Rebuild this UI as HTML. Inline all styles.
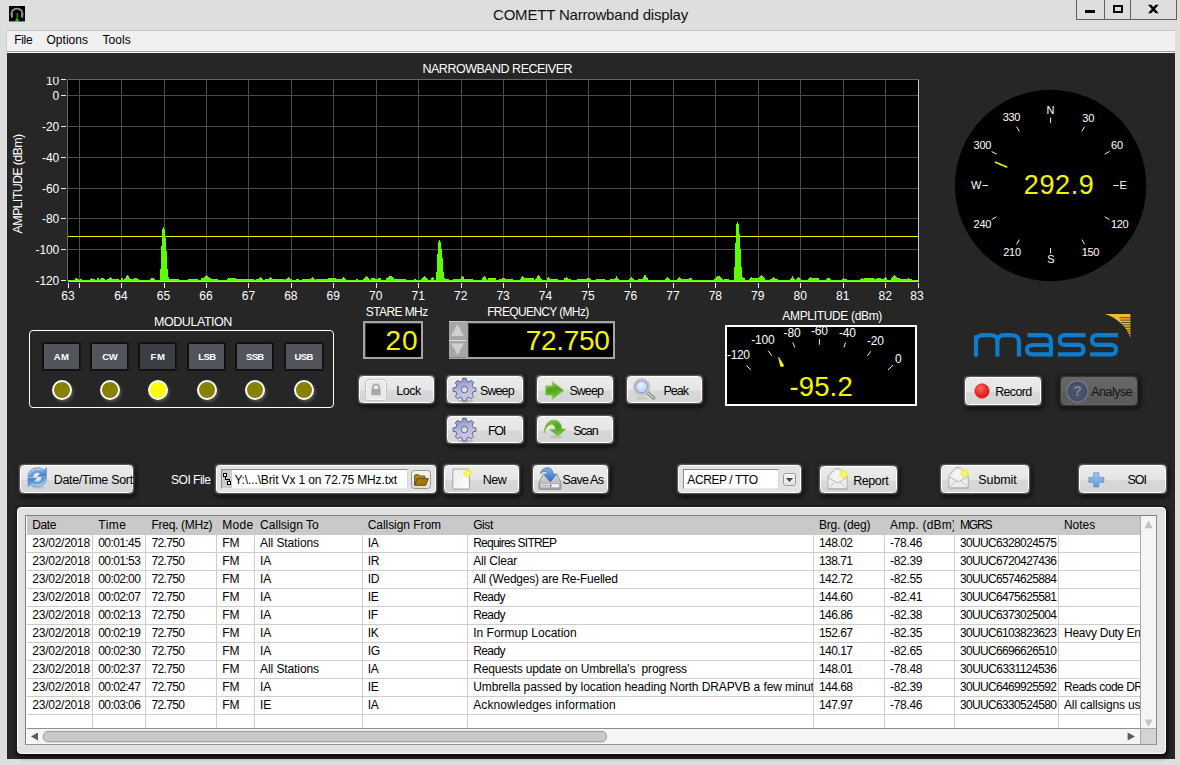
<!DOCTYPE html>
<html><head><meta charset="utf-8"><title>COMETT Narrowband display</title>
<style>
html,body{margin:0;padding:0;}
body{width:1180px;height:765px;overflow:hidden;position:relative;background:#dedede;font-family:"Liberation Sans",sans-serif;}
.t{position:absolute;white-space:nowrap;}
.btn{position:absolute;box-sizing:border-box;border:1.5px solid #fff;border-radius:3.5px;background:linear-gradient(#ebebeb 0%,#e5e5e5 53%,#d8d8d8 55%,#d5d5d5 100%);box-shadow:0 0 2px 0.6px rgba(190,190,190,.55),1px 1.5px 4px 2px rgba(0,0,0,.75);overflow:hidden;}
svg{position:absolute;overflow:visible;}
</style></head><body>
<svg style="left:9px;top:6px" width="16" height="16" viewBox="0 0 16 16"><rect width="16" height="16" fill="#000"/>
<path d="M3.2 11 C1.5 8 2.5 2.6 8 2.6 C13.5 2.6 14.5 8 12.8 11" fill="none" stroke="#8c8c8c" stroke-width="1.8"/>
<rect x="1.8" y="7" width="2.2" height="4.5" fill="#8c8c8c"/><rect x="12" y="7" width="2.2" height="4.5" fill="#8c8c8c"/>
<path d="M0 16 L0 15 L6 15 L7.6 12.5 L7.6 7 L8.6 7 L8.6 12.5 L10 15 L16 15 L16 16 Z" fill="#00e000"/></svg>
<div class="t" style="left:493.00px;top:7.20px;font-size:15px;line-height:15px;color:#111;letter-spacing:-0.191px;">COMETT Narrowband display</div>
<div style="position:absolute;left:1076px;top:-1px;width:101px;height:21px;box-sizing:border-box;border:1px solid #5c6068;"></div>
<div style="position:absolute;left:1104px;top:0px;width:1px;height:19px;background:#5c6068;"></div>
<div style="position:absolute;left:1130px;top:0px;width:1px;height:19px;background:#5c6068;"></div>
<div style="position:absolute;left:1085px;top:10px;width:10px;height:3px;background:#000;"></div>
<div style="position:absolute;left:1113px;top:5px;width:10px;height:8px;box-sizing:border-box;border:2px solid #000;border-top-width:2px;"></div>
<svg style="left:1148px;top:4px;overflow:hidden" width="11" height="10" viewBox="0 0 11 10"><defs><clipPath id="cx"><rect x="0" y="0.7" width="11" height="8.5"/></clipPath></defs><path d="M0.2 -0.8 L10.4 10.8 M10.4 -0.8 L0.2 10.8" stroke="#000" stroke-width="2.5" clip-path="url(#cx)"/></svg>
<div style="position:absolute;left:7px;top:30px;width:1168px;height:1px;background:#c6c6c6;"></div>
<div style="position:absolute;left:7px;top:31px;width:1168px;height:20px;background:#f0f0f0;"></div>
<div style="position:absolute;left:7px;top:51px;width:1168px;height:1px;background:#9c9c9c;"></div>
<div style="position:absolute;left:7px;top:52px;width:1168px;height:1px;background:#fbfbfb;"></div>
<div style="position:absolute;left:6px;top:30px;width:1px;height:23px;background:#d2d2d2;"></div>
<div class="t" style="left:14.20px;top:33.54px;font-size:12px;line-height:12px;color:#000;letter-spacing:-0.309px;">File</div>
<div class="t" style="left:46.50px;top:33.54px;font-size:12px;line-height:12px;color:#000;letter-spacing:0.021px;">Options</div>
<div class="t" style="left:102.40px;top:33.54px;font-size:12px;line-height:12px;color:#000;letter-spacing:0.117px;">Tools</div>
<div style="position:absolute;left:7px;top:53px;width:1168px;height:706px;background:#262626;"></div>
<div class="t" style="left:422.50px;top:63.12px;font-size:12.5px;line-height:12.5px;color:#fff;letter-spacing:-0.503px;">NARROWBAND RECEIVER</div>
<svg style="left:0;top:0" width="1180" height="320" viewBox="0 0 1180 320" shape-rendering="crispEdges">
<rect x="68.0" y="79.8" width="850.0" height="200.8" fill="#000"/>
<line x1="79.5" y1="79.8" x2="79.5" y2="280.7" stroke="#4a4a4a" stroke-width="1"/>
<line x1="79.5" y1="283" x2="79.5" y2="288" stroke="#e8e8e8" stroke-width="1"/>
<line x1="121.5" y1="79.8" x2="121.5" y2="280.7" stroke="#4a4a4a" stroke-width="1"/>
<line x1="121.5" y1="283" x2="121.5" y2="288" stroke="#e8e8e8" stroke-width="1"/>
<line x1="164.5" y1="79.8" x2="164.5" y2="280.7" stroke="#4a4a4a" stroke-width="1"/>
<line x1="164.5" y1="283" x2="164.5" y2="288" stroke="#e8e8e8" stroke-width="1"/>
<line x1="206.5" y1="79.8" x2="206.5" y2="280.7" stroke="#4a4a4a" stroke-width="1"/>
<line x1="206.5" y1="283" x2="206.5" y2="288" stroke="#e8e8e8" stroke-width="1"/>
<line x1="248.5" y1="79.8" x2="248.5" y2="280.7" stroke="#4a4a4a" stroke-width="1"/>
<line x1="248.5" y1="283" x2="248.5" y2="288" stroke="#e8e8e8" stroke-width="1"/>
<line x1="291.5" y1="79.8" x2="291.5" y2="280.7" stroke="#4a4a4a" stroke-width="1"/>
<line x1="291.5" y1="283" x2="291.5" y2="288" stroke="#e8e8e8" stroke-width="1"/>
<line x1="333.5" y1="79.8" x2="333.5" y2="280.7" stroke="#4a4a4a" stroke-width="1"/>
<line x1="333.5" y1="283" x2="333.5" y2="288" stroke="#e8e8e8" stroke-width="1"/>
<line x1="376.5" y1="79.8" x2="376.5" y2="280.7" stroke="#4a4a4a" stroke-width="1"/>
<line x1="376.5" y1="283" x2="376.5" y2="288" stroke="#e8e8e8" stroke-width="1"/>
<line x1="418.5" y1="79.8" x2="418.5" y2="280.7" stroke="#4a4a4a" stroke-width="1"/>
<line x1="418.5" y1="283" x2="418.5" y2="288" stroke="#e8e8e8" stroke-width="1"/>
<line x1="461.5" y1="79.8" x2="461.5" y2="280.7" stroke="#4a4a4a" stroke-width="1"/>
<line x1="461.5" y1="283" x2="461.5" y2="288" stroke="#e8e8e8" stroke-width="1"/>
<line x1="503.5" y1="79.8" x2="503.5" y2="280.7" stroke="#4a4a4a" stroke-width="1"/>
<line x1="503.5" y1="283" x2="503.5" y2="288" stroke="#e8e8e8" stroke-width="1"/>
<line x1="546.5" y1="79.8" x2="546.5" y2="280.7" stroke="#4a4a4a" stroke-width="1"/>
<line x1="546.5" y1="283" x2="546.5" y2="288" stroke="#e8e8e8" stroke-width="1"/>
<line x1="588.5" y1="79.8" x2="588.5" y2="280.7" stroke="#4a4a4a" stroke-width="1"/>
<line x1="588.5" y1="283" x2="588.5" y2="288" stroke="#e8e8e8" stroke-width="1"/>
<line x1="630.5" y1="79.8" x2="630.5" y2="280.7" stroke="#4a4a4a" stroke-width="1"/>
<line x1="630.5" y1="283" x2="630.5" y2="288" stroke="#e8e8e8" stroke-width="1"/>
<line x1="673.5" y1="79.8" x2="673.5" y2="280.7" stroke="#4a4a4a" stroke-width="1"/>
<line x1="673.5" y1="283" x2="673.5" y2="288" stroke="#e8e8e8" stroke-width="1"/>
<line x1="715.5" y1="79.8" x2="715.5" y2="280.7" stroke="#4a4a4a" stroke-width="1"/>
<line x1="715.5" y1="283" x2="715.5" y2="288" stroke="#e8e8e8" stroke-width="1"/>
<line x1="758.5" y1="79.8" x2="758.5" y2="280.7" stroke="#4a4a4a" stroke-width="1"/>
<line x1="758.5" y1="283" x2="758.5" y2="288" stroke="#e8e8e8" stroke-width="1"/>
<line x1="800.5" y1="79.8" x2="800.5" y2="280.7" stroke="#4a4a4a" stroke-width="1"/>
<line x1="800.5" y1="283" x2="800.5" y2="288" stroke="#e8e8e8" stroke-width="1"/>
<line x1="843.5" y1="79.8" x2="843.5" y2="280.7" stroke="#4a4a4a" stroke-width="1"/>
<line x1="843.5" y1="283" x2="843.5" y2="288" stroke="#e8e8e8" stroke-width="1"/>
<line x1="885.5" y1="79.8" x2="885.5" y2="280.7" stroke="#4a4a4a" stroke-width="1"/>
<line x1="885.5" y1="283" x2="885.5" y2="288" stroke="#e8e8e8" stroke-width="1"/>
<line x1="68.5" y1="283" x2="68.5" y2="288" stroke="#e8e8e8" stroke-width="1"/>
<line x1="918.5" y1="283" x2="918.5" y2="288" stroke="#e8e8e8" stroke-width="1"/>
<line x1="61" y1="79.5" x2="66" y2="79.5" stroke="#e8e8e8" stroke-width="1"/>
<line x1="68.0" y1="95.5" x2="918.0" y2="95.5" stroke="#4a4a4a" stroke-width="1"/>
<line x1="61" y1="95.5" x2="66" y2="95.5" stroke="#e8e8e8" stroke-width="1"/>
<line x1="68.0" y1="126.5" x2="918.0" y2="126.5" stroke="#4a4a4a" stroke-width="1"/>
<line x1="61" y1="126.5" x2="66" y2="126.5" stroke="#e8e8e8" stroke-width="1"/>
<line x1="68.0" y1="157.5" x2="918.0" y2="157.5" stroke="#4a4a4a" stroke-width="1"/>
<line x1="61" y1="157.5" x2="66" y2="157.5" stroke="#e8e8e8" stroke-width="1"/>
<line x1="68.0" y1="188.5" x2="918.0" y2="188.5" stroke="#4a4a4a" stroke-width="1"/>
<line x1="61" y1="188.5" x2="66" y2="188.5" stroke="#e8e8e8" stroke-width="1"/>
<line x1="68.0" y1="218.5" x2="918.0" y2="218.5" stroke="#4a4a4a" stroke-width="1"/>
<line x1="61" y1="218.5" x2="66" y2="218.5" stroke="#e8e8e8" stroke-width="1"/>
<line x1="68.0" y1="249.5" x2="918.0" y2="249.5" stroke="#4a4a4a" stroke-width="1"/>
<line x1="61" y1="249.5" x2="66" y2="249.5" stroke="#e8e8e8" stroke-width="1"/>
<line x1="61" y1="280.5" x2="66" y2="280.5" stroke="#e8e8e8" stroke-width="1"/>
<rect x="67.5" y="79.5" width="851.0" height="200.8" fill="none" stroke="#666" stroke-width="1"/>
<line x1="918.5" y1="79.8" x2="918.5" y2="281.2" stroke="#d0d0d0" stroke-width="1"/>
<line x1="68.0" y1="236.5" x2="918.0" y2="236.5" stroke="#f0f000" stroke-width="1.2"/>
<polygon points="68.0,281.0 68.0,280.0 69.0,280.0 69.0,280.0 70.0,280.0 70.0,280.0 71.0,280.0 71.0,280.0 72.0,280.0 72.0,280.0 73.0,280.0 73.0,280.0 74.0,280.0 74.0,280.0 75.0,280.0 75.0,278.0 76.0,278.0 76.0,278.0 77.0,278.0 77.0,279.0 78.0,279.0 78.0,279.0 79.0,279.0 79.0,279.5 80.0,279.5 80.0,278.5 81.0,278.5 81.0,278.5 82.0,278.5 82.0,279.5 83.0,279.5 83.0,280.0 84.0,280.0 84.0,280.0 85.0,280.0 85.0,280.0 86.0,280.0 86.0,280.0 87.0,280.0 87.0,280.0 88.0,280.0 88.0,280.0 89.0,280.0 89.0,280.0 90.0,280.0 90.0,279.0 91.0,279.0 91.0,278.0 92.0,278.0 92.0,279.0 93.0,279.0 93.0,279.0 94.0,279.0 94.0,279.0 95.0,279.0 95.0,280.0 96.0,280.0 96.0,280.0 97.0,280.0 97.0,278.0 98.0,278.0 98.0,278.0 99.0,278.0 99.0,280.0 100.0,280.0 100.0,279.2 101.0,279.2 101.0,278.4 102.0,278.4 102.0,277.5 103.0,277.5 103.0,278.4 104.0,278.4 104.0,279.2 105.0,279.2 105.0,280.0 106.0,280.0 106.0,280.0 107.0,280.0 107.0,279.4 108.0,279.4 108.0,278.6 109.0,278.6 109.0,277.8 110.0,277.8 110.0,277.0 111.0,277.0 111.0,277.8 112.0,277.8 112.0,278.6 113.0,278.6 113.0,279.4 114.0,279.4 114.0,279.0 115.0,279.0 115.0,279.0 116.0,279.0 116.0,279.0 117.0,279.0 117.0,279.0 118.0,279.0 118.0,279.0 119.0,279.0 119.0,280.0 120.0,280.0 120.0,280.0 121.0,280.0 121.0,278.0 122.0,278.0 122.0,278.0 123.0,278.0 123.0,280.0 124.0,280.0 124.0,279.4 125.0,279.4 125.0,277.8 126.0,277.8 126.0,276.1 127.0,276.1 127.0,274.5 128.0,274.5 128.0,276.1 129.0,276.1 129.0,277.8 130.0,277.8 130.0,279.4 131.0,279.4 131.0,279.0 132.0,279.0 132.0,279.0 133.0,279.0 133.0,279.0 134.0,279.0 134.0,278.0 135.0,278.0 135.0,278.0 136.0,278.0 136.0,278.0 137.0,278.0 137.0,279.0 138.0,279.0 138.0,279.0 139.0,279.0 139.0,280.0 140.0,280.0 140.0,280.0 141.0,280.0 141.0,280.0 142.0,280.0 142.0,280.0 143.0,280.0 143.0,280.0 144.0,280.0 144.0,280.0 145.0,280.0 145.0,280.0 146.0,280.0 146.0,280.0 147.0,280.0 147.0,280.0 148.0,280.0 148.0,280.0 149.0,280.0 149.0,280.0 150.0,280.0 150.0,279.2 151.0,279.2 151.0,278.4 152.0,278.4 152.0,277.5 153.0,277.5 153.0,278.4 154.0,278.4 154.0,279.2 155.0,279.2 155.0,280.0 156.0,280.0 156.0,280.0 157.0,280.0 157.0,280.0 158.0,280.0 158.0,280.0 159.0,280.0 159.0,280.0 160.0,280.0 160.0,268.5 161.0,268.5 161.0,245.8 162.0,245.8 162.0,229.0 163.0,229.0 163.0,226.8 164.0,226.8 164.0,229.0 165.0,229.0 165.0,238.2 166.0,238.2 166.0,251.2 167.0,251.2 167.0,268.5 168.0,268.5 168.0,277.0 169.0,277.0 169.0,279.0 170.0,279.0 170.0,279.0 171.0,279.0 171.0,279.0 172.0,279.0 172.0,279.0 173.0,279.0 173.0,279.0 174.0,279.0 174.0,279.0 175.0,279.0 175.0,279.0 176.0,279.0 176.0,279.0 177.0,279.0 177.0,279.0 178.0,279.0 178.0,279.0 179.0,279.0 179.0,280.0 180.0,280.0 180.0,280.0 181.0,280.0 181.0,280.0 182.0,280.0 182.0,280.0 183.0,280.0 183.0,280.0 184.0,280.0 184.0,280.0 185.0,280.0 185.0,280.0 186.0,280.0 186.0,280.0 187.0,280.0 187.0,280.0 188.0,280.0 188.0,279.0 189.0,279.0 189.0,279.0 190.0,279.0 190.0,279.0 191.0,279.0 191.0,279.0 192.0,279.0 192.0,279.0 193.0,279.0 193.0,279.0 194.0,279.0 194.0,279.0 195.0,279.0 195.0,279.0 196.0,279.0 196.0,279.0 197.0,279.0 197.0,279.0 198.0,279.0 198.0,280.0 199.0,280.0 199.0,280.0 200.0,280.0 200.0,280.0 201.0,280.0 201.0,278.0 202.0,278.0 202.0,278.0 203.0,278.0 203.0,277.6 204.0,277.6 204.0,276.7 205.0,276.7 205.0,275.9 206.0,275.9 206.0,275.0 207.0,275.0 207.0,275.9 208.0,275.9 208.0,276.7 209.0,276.7 209.0,277.6 210.0,277.6 210.0,278.4 211.0,278.4 211.0,279.0 212.0,279.0 212.0,279.0 213.0,279.0 213.0,279.0 214.0,279.0 214.0,279.0 215.0,279.0 215.0,279.0 216.0,279.0 216.0,279.0 217.0,279.0 217.0,279.0 218.0,279.0 218.0,280.0 219.0,280.0 219.0,280.0 220.0,280.0 220.0,280.0 221.0,280.0 221.0,280.0 222.0,280.0 222.0,280.0 223.0,280.0 223.0,280.0 224.0,280.0 224.0,280.0 225.0,280.0 225.0,280.0 226.0,280.0 226.0,279.8 227.0,279.8 227.0,279.2 228.0,279.2 228.0,278.0 229.0,278.0 229.0,278.0 230.0,278.0 230.0,277.5 231.0,277.5 231.0,278.0 232.0,278.0 232.0,278.0 233.0,278.0 233.0,278.0 234.0,278.0 234.0,278.0 235.0,278.0 235.0,278.0 236.0,278.0 236.0,279.0 237.0,279.0 237.0,279.0 238.0,279.0 238.0,279.0 239.0,279.0 239.0,279.0 240.0,279.0 240.0,279.0 241.0,279.0 241.0,279.0 242.0,279.0 242.0,279.0 243.0,279.0 243.0,279.0 244.0,279.0 244.0,279.0 245.0,279.0 245.0,279.0 246.0,279.0 246.0,279.0 247.0,279.0 247.0,279.0 248.0,279.0 248.0,279.0 249.0,279.0 249.0,279.0 250.0,279.0 250.0,279.0 251.0,279.0 251.0,279.0 252.0,279.0 252.0,279.0 253.0,279.0 253.0,279.0 254.0,279.0 254.0,280.0 255.0,280.0 255.0,280.0 256.0,280.0 256.0,279.0 257.0,279.0 257.0,279.0 258.0,279.0 258.0,279.0 259.0,279.0 259.0,278.0 260.0,278.0 260.0,277.0 261.0,277.0 261.0,278.0 262.0,278.0 262.0,279.0 263.0,279.0 263.0,280.0 264.0,280.0 264.0,280.0 265.0,280.0 265.0,279.0 266.0,279.0 266.0,279.0 267.0,279.0 267.0,279.0 268.0,279.0 268.0,279.0 269.0,279.0 269.0,278.0 270.0,278.0 270.0,277.0 271.0,277.0 271.0,278.0 272.0,278.0 272.0,279.0 273.0,279.0 273.0,279.0 274.0,279.0 274.0,279.0 275.0,279.0 275.0,279.0 276.0,279.0 276.0,279.0 277.0,279.0 277.0,279.0 278.0,279.0 278.0,279.0 279.0,279.0 279.0,279.0 280.0,279.0 280.0,279.0 281.0,279.0 281.0,279.0 282.0,279.0 282.0,279.0 283.0,279.0 283.0,279.0 284.0,279.0 284.0,280.0 285.0,280.0 285.0,279.4 286.0,279.4 286.0,278.6 287.0,278.6 287.0,277.8 288.0,277.8 288.0,277.0 289.0,277.0 289.0,277.8 290.0,277.8 290.0,278.6 291.0,278.6 291.0,279.4 292.0,279.4 292.0,280.0 293.0,280.0 293.0,280.0 294.0,280.0 294.0,280.0 295.0,280.0 295.0,280.0 296.0,280.0 296.0,279.0 297.0,279.0 297.0,279.0 298.0,279.0 298.0,279.0 299.0,279.0 299.0,280.0 300.0,280.0 300.0,280.0 301.0,280.0 301.0,280.0 302.0,280.0 302.0,279.0 303.0,279.0 303.0,279.0 304.0,279.0 304.0,279.0 305.0,279.0 305.0,279.0 306.0,279.0 306.0,279.0 307.0,279.0 307.0,279.0 308.0,279.0 308.0,279.0 309.0,279.0 309.0,279.0 310.0,279.0 310.0,279.0 311.0,279.0 311.0,278.0 312.0,278.0 312.0,277.0 313.0,277.0 313.0,278.0 314.0,278.0 314.0,279.0 315.0,279.0 315.0,280.0 316.0,280.0 316.0,279.0 317.0,279.0 317.0,279.0 318.0,279.0 318.0,279.0 319.0,279.0 319.0,279.0 320.0,279.0 320.0,279.0 321.0,279.0 321.0,279.0 322.0,279.0 322.0,279.0 323.0,279.0 323.0,279.0 324.0,279.0 324.0,279.0 325.0,279.0 325.0,279.0 326.0,279.0 326.0,279.0 327.0,279.0 327.0,279.0 328.0,279.0 328.0,278.0 329.0,278.0 329.0,278.0 330.0,278.0 330.0,278.0 331.0,278.0 331.0,278.0 332.0,278.0 332.0,278.0 333.0,278.0 333.0,278.0 334.0,278.0 334.0,278.0 335.0,278.0 335.0,278.0 336.0,278.0 336.0,279.0 337.0,279.0 337.0,279.0 338.0,279.0 338.0,279.0 339.0,279.0 339.0,279.0 340.0,279.0 340.0,279.0 341.0,279.0 341.0,278.8 342.0,278.8 342.0,277.6 343.0,277.6 343.0,276.5 344.0,276.5 344.0,277.6 345.0,277.6 345.0,278.8 346.0,278.8 346.0,279.9 347.0,279.9 347.0,280.0 348.0,280.0 348.0,280.0 349.0,280.0 349.0,280.0 350.0,280.0 350.0,280.0 351.0,280.0 351.0,280.0 352.0,280.0 352.0,280.0 353.0,280.0 353.0,280.0 354.0,280.0 354.0,280.0 355.0,280.0 355.0,280.0 356.0,280.0 356.0,279.0 357.0,279.0 357.0,279.0 358.0,279.0 358.0,280.0 359.0,280.0 359.0,280.0 360.0,280.0 360.0,280.0 361.0,280.0 361.0,280.0 362.0,280.0 362.0,280.0 363.0,280.0 363.0,279.0 364.0,279.0 364.0,278.0 365.0,278.0 365.0,277.0 366.0,277.0 366.0,276.0 367.0,276.0 367.0,277.0 368.0,277.0 368.0,278.0 369.0,278.0 369.0,279.0 370.0,279.0 370.0,280.0 371.0,280.0 371.0,278.0 372.0,278.0 372.0,278.0 373.0,278.0 373.0,278.0 374.0,278.0 374.0,278.0 375.0,278.0 375.0,279.0 376.0,279.0 376.0,279.0 377.0,279.0 377.0,279.0 378.0,279.0 378.0,278.0 379.0,278.0 379.0,278.0 380.0,278.0 380.0,278.0 381.0,278.0 381.0,280.0 382.0,280.0 382.0,280.0 383.0,280.0 383.0,280.0 384.0,280.0 384.0,280.0 385.0,280.0 385.0,280.0 386.0,280.0 386.0,278.0 387.0,278.0 387.0,278.0 388.0,278.0 388.0,277.3 389.0,277.3 389.0,276.4 390.0,276.4 390.0,275.5 391.0,275.5 391.0,276.4 392.0,276.4 392.0,277.3 393.0,277.3 393.0,278.2 394.0,278.2 394.0,279.0 395.0,279.0 395.0,279.0 396.0,279.0 396.0,279.0 397.0,279.0 397.0,279.0 398.0,279.0 398.0,279.0 399.0,279.0 399.0,279.0 400.0,279.0 400.0,279.0 401.0,279.0 401.0,279.0 402.0,279.0 402.0,279.0 403.0,279.0 403.0,279.0 404.0,279.0 404.0,279.0 405.0,279.0 405.0,279.0 406.0,279.0 406.0,280.0 407.0,280.0 407.0,280.0 408.0,280.0 408.0,280.0 409.0,280.0 409.0,280.0 410.0,280.0 410.0,280.0 411.0,280.0 411.0,280.0 412.0,280.0 412.0,280.0 413.0,280.0 413.0,280.0 414.0,280.0 414.0,279.0 415.0,279.0 415.0,279.0 416.0,279.0 416.0,280.0 417.0,280.0 417.0,280.0 418.0,280.0 418.0,280.0 419.0,280.0 419.0,280.0 420.0,280.0 420.0,280.0 421.0,280.0 421.0,279.0 422.0,279.0 422.0,278.0 423.0,278.0 423.0,277.0 424.0,277.0 424.0,276.0 425.0,276.0 425.0,277.0 426.0,277.0 426.0,278.0 427.0,278.0 427.0,279.0 428.0,279.0 428.0,280.0 429.0,280.0 429.0,280.0 430.0,280.0 430.0,279.7 431.0,279.7 431.0,278.3 432.0,278.3 432.0,277.0 433.0,277.0 433.0,278.3 434.0,278.3 434.0,279.7 435.0,279.7 435.0,280.0 436.0,280.0 436.0,271.6 437.0,271.6 437.0,254.3 438.0,254.3 438.0,241.6 439.0,241.6 439.0,240.0 440.0,240.0 440.0,241.6 441.0,241.6 441.0,248.6 442.0,248.6 442.0,258.4 443.0,258.4 443.0,271.6 444.0,271.6 444.0,278.0 445.0,278.0 445.0,279.0 446.0,279.0 446.0,279.0 447.0,279.0 447.0,279.0 448.0,279.0 448.0,279.0 449.0,279.0 449.0,280.0 450.0,280.0 450.0,280.0 451.0,280.0 451.0,280.0 452.0,280.0 452.0,280.0 453.0,280.0 453.0,279.0 454.0,279.0 454.0,279.0 455.0,279.0 455.0,279.0 456.0,279.0 456.0,279.0 457.0,279.0 457.0,279.0 458.0,279.0 458.0,279.0 459.0,279.0 459.0,279.0 460.0,279.0 460.0,278.5 461.0,278.5 461.0,277.2 462.0,277.2 462.0,276.0 463.0,276.0 463.0,277.2 464.0,277.2 464.0,278.5 465.0,278.5 465.0,279.0 466.0,279.0 466.0,279.0 467.0,279.0 467.0,279.0 468.0,279.0 468.0,279.0 469.0,279.0 469.0,279.0 470.0,279.0 470.0,279.0 471.0,279.0 471.0,279.0 472.0,279.0 472.0,279.0 473.0,279.0 473.0,280.0 474.0,280.0 474.0,280.0 475.0,280.0 475.0,280.0 476.0,280.0 476.0,280.0 477.0,280.0 477.0,280.0 478.0,280.0 478.0,280.0 479.0,280.0 479.0,280.0 480.0,280.0 480.0,280.0 481.0,280.0 481.0,280.0 482.0,280.0 482.0,278.0 483.0,278.0 483.0,277.3 484.0,277.3 484.0,275.5 485.0,275.5 485.0,277.3 486.0,277.3 486.0,279.2 487.0,279.2 487.0,280.0 488.0,280.0 488.0,278.0 489.0,278.0 489.0,278.0 490.0,278.0 490.0,278.0 491.0,278.0 491.0,278.0 492.0,278.0 492.0,278.0 493.0,278.0 493.0,278.0 494.0,278.0 494.0,278.0 495.0,278.0 495.0,278.0 496.0,278.0 496.0,280.0 497.0,280.0 497.0,280.0 498.0,280.0 498.0,280.0 499.0,280.0 499.0,279.0 500.0,279.0 500.0,279.0 501.0,279.0 501.0,278.9 502.0,278.9 502.0,278.2 503.0,278.2 503.0,277.5 504.0,277.5 504.0,278.2 505.0,278.2 505.0,278.9 506.0,278.9 506.0,279.0 507.0,279.0 507.0,279.0 508.0,279.0 508.0,279.0 509.0,279.0 509.0,279.0 510.0,279.0 510.0,279.0 511.0,279.0 511.0,279.0 512.0,279.0 512.0,279.0 513.0,279.0 513.0,280.0 514.0,280.0 514.0,280.0 515.0,280.0 515.0,280.0 516.0,280.0 516.0,280.0 517.0,280.0 517.0,280.0 518.0,280.0 518.0,280.0 519.0,280.0 519.0,279.8 520.0,279.8 520.0,278.5 521.0,278.5 521.0,277.2 522.0,277.2 522.0,276.0 523.0,276.0 523.0,277.2 524.0,277.2 524.0,278.0 525.0,278.0 525.0,278.0 526.0,278.0 526.0,278.0 527.0,278.0 527.0,278.0 528.0,278.0 528.0,278.0 529.0,278.0 529.0,278.0 530.0,278.0 530.0,278.0 531.0,278.0 531.0,278.0 532.0,278.0 532.0,278.0 533.0,278.0 533.0,278.0 534.0,278.0 534.0,280.0 535.0,280.0 535.0,279.4 536.0,279.4 536.0,277.8 537.0,277.8 537.0,276.1 538.0,276.1 538.0,274.5 539.0,274.5 539.0,276.1 540.0,276.1 540.0,277.8 541.0,277.8 541.0,279.4 542.0,279.4 542.0,280.0 543.0,280.0 543.0,280.0 544.0,280.0 544.0,280.0 545.0,280.0 545.0,280.0 546.0,280.0 546.0,279.7 547.0,279.7 547.0,278.3 548.0,278.3 548.0,277.0 549.0,277.0 549.0,278.3 550.0,278.3 550.0,279.0 551.0,279.0 551.0,279.0 552.0,279.0 552.0,279.0 553.0,279.0 553.0,279.0 554.0,279.0 554.0,279.0 555.0,279.0 555.0,279.0 556.0,279.0 556.0,279.0 557.0,279.0 557.0,279.0 558.0,279.0 558.0,280.0 559.0,280.0 559.0,280.0 560.0,280.0 560.0,280.0 561.0,280.0 561.0,280.0 562.0,280.0 562.0,280.0 563.0,280.0 563.0,280.0 564.0,280.0 564.0,278.0 565.0,278.0 565.0,278.0 566.0,278.0 566.0,277.0 567.0,277.0 567.0,278.0 568.0,278.0 568.0,279.0 569.0,279.0 569.0,279.0 570.0,279.0 570.0,279.0 571.0,279.0 571.0,280.0 572.0,280.0 572.0,280.0 573.0,280.0 573.0,280.0 574.0,280.0 574.0,280.0 575.0,280.0 575.0,280.0 576.0,280.0 576.0,280.0 577.0,280.0 577.0,279.0 578.0,279.0 578.0,279.0 579.0,279.0 579.0,279.0 580.0,279.0 580.0,279.0 581.0,279.0 581.0,279.0 582.0,279.0 582.0,279.0 583.0,279.0 583.0,279.0 584.0,279.0 584.0,279.0 585.0,279.0 585.0,279.0 586.0,279.0 586.0,279.0 587.0,279.0 587.0,278.4 588.0,278.4 588.0,277.5 589.0,277.5 589.0,278.4 590.0,278.4 590.0,279.2 591.0,279.2 591.0,280.0 592.0,280.0 592.0,280.0 593.0,280.0 593.0,280.0 594.0,280.0 594.0,280.0 595.0,280.0 595.0,280.0 596.0,280.0 596.0,279.0 597.0,279.0 597.0,279.0 598.0,279.0 598.0,279.0 599.0,279.0 599.0,279.0 600.0,279.0 600.0,279.0 601.0,279.0 601.0,279.0 602.0,279.0 602.0,279.0 603.0,279.0 603.0,279.0 604.0,279.0 604.0,279.0 605.0,279.0 605.0,280.0 606.0,280.0 606.0,280.0 607.0,280.0 607.0,280.0 608.0,280.0 608.0,280.0 609.0,280.0 609.0,280.0 610.0,280.0 610.0,279.0 611.0,279.0 611.0,279.0 612.0,279.0 612.0,279.0 613.0,279.0 613.0,279.0 614.0,279.0 614.0,279.3 615.0,279.3 615.0,277.7 616.0,277.7 616.0,276.0 617.0,276.0 617.0,277.7 618.0,277.7 618.0,279.3 619.0,279.3 619.0,280.0 620.0,280.0 620.0,280.0 621.0,280.0 621.0,280.0 622.0,280.0 622.0,280.0 623.0,280.0 623.0,280.0 624.0,280.0 624.0,280.0 625.0,280.0 625.0,280.0 626.0,280.0 626.0,280.0 627.0,280.0 627.0,280.0 628.0,280.0 628.0,279.9 629.0,279.9 629.0,278.8 630.0,278.8 630.0,277.6 631.0,277.6 631.0,276.5 632.0,276.5 632.0,277.6 633.0,277.6 633.0,278.8 634.0,278.8 634.0,279.9 635.0,279.9 635.0,280.0 636.0,280.0 636.0,280.0 637.0,280.0 637.0,280.0 638.0,280.0 638.0,279.0 639.0,279.0 639.0,279.0 640.0,279.0 640.0,279.0 641.0,279.0 641.0,279.0 642.0,279.0 642.0,279.0 643.0,279.0 643.0,277.0 644.0,277.0 644.0,275.0 645.0,275.0 645.0,275.0 646.0,275.0 646.0,276.5 647.0,276.5 647.0,278.0 648.0,278.0 648.0,279.5 649.0,279.5 649.0,280.0 650.0,280.0 650.0,280.0 651.0,280.0 651.0,280.0 652.0,280.0 652.0,280.0 653.0,280.0 653.0,280.0 654.0,280.0 654.0,280.0 655.0,280.0 655.0,280.0 656.0,280.0 656.0,280.0 657.0,280.0 657.0,280.0 658.0,280.0 658.0,280.0 659.0,280.0 659.0,280.0 660.0,280.0 660.0,280.0 661.0,280.0 661.0,280.0 662.0,280.0 662.0,280.0 663.0,280.0 663.0,280.0 664.0,280.0 664.0,280.0 665.0,280.0 665.0,279.0 666.0,279.0 666.0,278.0 667.0,278.0 667.0,277.0 668.0,277.0 668.0,278.0 669.0,278.0 669.0,279.0 670.0,279.0 670.0,280.0 671.0,280.0 671.0,280.0 672.0,280.0 672.0,280.0 673.0,280.0 673.0,280.0 674.0,280.0 674.0,280.0 675.0,280.0 675.0,280.0 676.0,280.0 676.0,279.9 677.0,279.9 677.0,278.8 678.0,278.8 678.0,277.6 679.0,277.6 679.0,276.5 680.0,276.5 680.0,277.6 681.0,277.6 681.0,278.8 682.0,278.8 682.0,279.0 683.0,279.0 683.0,279.0 684.0,279.0 684.0,279.0 685.0,279.0 685.0,279.0 686.0,279.0 686.0,279.0 687.0,279.0 687.0,279.0 688.0,279.0 688.0,279.0 689.0,279.0 689.0,278.0 690.0,278.0 690.0,278.0 691.0,278.0 691.0,278.0 692.0,278.0 692.0,280.0 693.0,280.0 693.0,280.0 694.0,280.0 694.0,280.0 695.0,280.0 695.0,280.0 696.0,280.0 696.0,280.0 697.0,280.0 697.0,280.0 698.0,280.0 698.0,280.0 699.0,280.0 699.0,280.0 700.0,280.0 700.0,280.0 701.0,280.0 701.0,280.0 702.0,280.0 702.0,280.0 703.0,280.0 703.0,280.0 704.0,280.0 704.0,280.0 705.0,280.0 705.0,280.0 706.0,280.0 706.0,280.0 707.0,280.0 707.0,280.0 708.0,280.0 708.0,280.0 709.0,280.0 709.0,280.0 710.0,280.0 710.0,280.0 711.0,280.0 711.0,280.0 712.0,280.0 712.0,280.0 713.0,280.0 713.0,280.0 714.0,280.0 714.0,279.2 715.0,279.2 715.0,278.2 716.0,278.2 716.0,277.3 717.0,277.3 717.0,276.4 718.0,276.4 718.0,275.5 719.0,275.5 719.0,276.4 720.0,276.4 720.0,277.3 721.0,277.3 721.0,278.2 722.0,278.2 722.0,279.2 723.0,279.2 723.0,280.0 724.0,280.0 724.0,279.0 725.0,279.0 725.0,279.0 726.0,279.0 726.0,279.0 727.0,279.0 727.0,279.0 728.0,279.0 728.0,279.0 729.0,279.0 729.0,280.0 730.0,280.0 730.0,280.0 731.0,280.0 731.0,280.0 732.0,280.0 732.0,280.0 733.0,280.0 733.0,280.0 734.0,280.0 734.0,267.4 735.0,267.4 735.0,242.7 736.0,242.7 736.0,224.4 737.0,224.4 737.0,222.0 738.0,222.0 738.0,224.4 739.0,224.4 739.0,234.4 740.0,234.4 740.0,248.6 741.0,248.6 741.0,267.4 742.0,267.4 742.0,276.6 743.0,276.6 743.0,278.0 744.0,278.0 744.0,278.0 745.0,278.0 745.0,280.0 746.0,280.0 746.0,280.0 747.0,280.0 747.0,280.0 748.0,280.0 748.0,279.9 749.0,279.9 749.0,278.8 750.0,278.8 750.0,277.6 751.0,277.6 751.0,276.5 752.0,276.5 752.0,277.6 753.0,277.6 753.0,278.0 754.0,278.0 754.0,278.0 755.0,278.0 755.0,278.0 756.0,278.0 756.0,278.0 757.0,278.0 757.0,278.0 758.0,278.0 758.0,278.0 759.0,278.0 759.0,277.1 760.0,277.1 760.0,275.8 761.0,275.8 761.0,274.5 762.0,274.5 762.0,275.8 763.0,275.8 763.0,277.1 764.0,277.1 764.0,278.0 765.0,278.0 765.0,279.7 766.0,279.7 766.0,280.0 767.0,280.0 767.0,280.0 768.0,280.0 768.0,280.0 769.0,280.0 769.0,280.0 770.0,280.0 770.0,279.0 771.0,279.0 771.0,279.0 772.0,279.0 772.0,278.3 773.0,278.3 773.0,277.0 774.0,277.0 774.0,278.3 775.0,278.3 775.0,279.0 776.0,279.0 776.0,279.0 777.0,279.0 777.0,279.0 778.0,279.0 778.0,280.0 779.0,280.0 779.0,280.0 780.0,280.0 780.0,280.0 781.0,280.0 781.0,280.0 782.0,280.0 782.0,280.0 783.0,280.0 783.0,280.0 784.0,280.0 784.0,280.0 785.0,280.0 785.0,280.0 786.0,280.0 786.0,280.0 787.0,280.0 787.0,280.0 788.0,280.0 788.0,280.0 789.0,280.0 789.0,280.0 790.0,280.0 790.0,279.3 791.0,279.3 791.0,277.7 792.0,277.7 792.0,276.0 793.0,276.0 793.0,277.7 794.0,277.7 794.0,279.3 795.0,279.3 795.0,280.0 796.0,280.0 796.0,279.0 797.0,279.0 797.0,278.0 798.0,278.0 798.0,277.0 799.0,277.0 799.0,278.0 800.0,278.0 800.0,279.0 801.0,279.0 801.0,280.0 802.0,280.0 802.0,280.0 803.0,280.0 803.0,280.0 804.0,280.0 804.0,280.0 805.0,280.0 805.0,280.0 806.0,280.0 806.0,280.0 807.0,280.0 807.0,280.0 808.0,280.0 808.0,279.0 809.0,279.0 809.0,278.0 810.0,278.0 810.0,277.0 811.0,277.0 811.0,278.0 812.0,278.0 812.0,278.0 813.0,278.0 813.0,278.0 814.0,278.0 814.0,278.0 815.0,278.0 815.0,278.0 816.0,278.0 816.0,278.0 817.0,278.0 817.0,278.0 818.0,278.0 818.0,278.0 819.0,278.0 819.0,280.0 820.0,280.0 820.0,280.0 821.0,280.0 821.0,280.0 822.0,280.0 822.0,280.0 823.0,280.0 823.0,280.0 824.0,280.0 824.0,280.0 825.0,280.0 825.0,280.0 826.0,280.0 826.0,279.2 827.0,279.2 827.0,278.4 828.0,278.4 828.0,277.5 829.0,277.5 829.0,278.4 830.0,278.4 830.0,279.2 831.0,279.2 831.0,280.0 832.0,280.0 832.0,280.0 833.0,280.0 833.0,280.0 834.0,280.0 834.0,280.0 835.0,280.0 835.0,280.0 836.0,280.0 836.0,280.0 837.0,280.0 837.0,280.0 838.0,280.0 838.0,280.0 839.0,280.0 839.0,280.0 840.0,280.0 840.0,280.0 841.0,280.0 841.0,280.0 842.0,280.0 842.0,279.0 843.0,279.0 843.0,278.0 844.0,278.0 844.0,279.0 845.0,279.0 845.0,279.0 846.0,279.0 846.0,279.0 847.0,279.0 847.0,280.0 848.0,280.0 848.0,280.0 849.0,280.0 849.0,280.0 850.0,280.0 850.0,280.0 851.0,280.0 851.0,280.0 852.0,280.0 852.0,280.0 853.0,280.0 853.0,280.0 854.0,280.0 854.0,280.0 855.0,280.0 855.0,280.0 856.0,280.0 856.0,280.0 857.0,280.0 857.0,280.0 858.0,280.0 858.0,280.0 859.0,280.0 859.0,280.0 860.0,280.0 860.0,279.0 861.0,279.0 861.0,278.7 862.0,278.7 862.0,277.5 863.0,277.5 863.0,278.7 864.0,278.7 864.0,278.0 865.0,278.0 865.0,278.0 866.0,278.0 866.0,278.0 867.0,278.0 867.0,278.0 868.0,278.0 868.0,278.0 869.0,278.0 869.0,278.0 870.0,278.0 870.0,278.0 871.0,278.0 871.0,278.0 872.0,278.0 872.0,278.0 873.0,278.0 873.0,277.5 874.0,277.5 874.0,278.7 875.0,278.7 875.0,279.0 876.0,279.0 876.0,279.0 877.0,279.0 877.0,278.0 878.0,278.0 878.0,278.0 879.0,278.0 879.0,278.0 880.0,278.0 880.0,278.0 881.0,278.0 881.0,279.0 882.0,279.0 882.0,279.0 883.0,279.0 883.0,279.0 884.0,279.0 884.0,278.3 885.0,278.3 885.0,277.0 886.0,277.0 886.0,278.3 887.0,278.3 887.0,279.7 888.0,279.7 888.0,280.0 889.0,280.0 889.0,280.0 890.0,280.0 890.0,279.8 891.0,279.8 891.0,278.0 892.0,278.0 892.0,277.4 893.0,277.4 893.0,276.2 894.0,276.2 894.0,275.0 895.0,275.0 895.0,276.2 896.0,276.2 896.0,277.4 897.0,277.4 897.0,278.0 898.0,278.0 898.0,278.0 899.0,278.0 899.0,278.0 900.0,278.0 900.0,279.0 901.0,279.0 901.0,279.0 902.0,279.0 902.0,279.0 903.0,279.0 903.0,279.0 904.0,279.0 904.0,279.0 905.0,279.0 905.0,279.0 906.0,279.0 906.0,279.0 907.0,279.0 907.0,279.0 908.0,279.0 908.0,278.0 909.0,278.0 909.0,279.0 910.0,279.0 910.0,279.0 911.0,279.0 911.0,279.0 912.0,279.0 912.0,280.0 913.0,280.0 913.0,280.0 914.0,280.0 914.0,280.0 915.0,280.0 915.0,280.0 916.0,280.0 916.0,280.0 917.0,280.0 917.0,280.0 918.0,280.0 918.0,281.0" fill="#5cff00"/>
<line x1="68.0" y1="281.5" x2="919.0" y2="281.5" stroke="#d0d0d0" stroke-width="1"/>
</svg>
<div class="t" style="right:1121.00px;top:75.04px;font-size:12px;line-height:12px;color:#fff;letter-spacing:-0.15px;">10</div>
<div class="t" style="right:1121.00px;top:90.04px;font-size:12px;line-height:12px;color:#fff;letter-spacing:-0.15px;">0</div>
<div class="t" style="right:1121.00px;top:121.04px;font-size:12px;line-height:12px;color:#fff;letter-spacing:-0.15px;">-20</div>
<div class="t" style="right:1121.00px;top:152.04px;font-size:12px;line-height:12px;color:#fff;letter-spacing:-0.15px;">-40</div>
<div class="t" style="right:1121.00px;top:183.04px;font-size:12px;line-height:12px;color:#fff;letter-spacing:-0.15px;">-60</div>
<div class="t" style="right:1121.00px;top:213.04px;font-size:12px;line-height:12px;color:#fff;letter-spacing:-0.15px;">-80</div>
<div class="t" style="right:1121.00px;top:244.04px;font-size:12px;line-height:12px;color:#fff;letter-spacing:-0.15px;">-100</div>
<div class="t" style="right:1121.00px;top:275.04px;font-size:12px;line-height:12px;color:#fff;letter-spacing:-0.15px;">-120</div>
<div class="t" style="left:-32.00px;width:200px;text-align:center;top:289.84px;font-size:12px;line-height:12px;color:#fff;letter-spacing:0px;">63</div>
<div class="t" style="left:21.06px;width:200px;text-align:center;top:289.84px;font-size:12px;line-height:12px;color:#fff;letter-spacing:0px;">64</div>
<div class="t" style="left:63.51px;width:200px;text-align:center;top:289.84px;font-size:12px;line-height:12px;color:#fff;letter-spacing:0px;">65</div>
<div class="t" style="left:105.96px;width:200px;text-align:center;top:289.84px;font-size:12px;line-height:12px;color:#fff;letter-spacing:0px;">66</div>
<div class="t" style="left:148.41px;width:200px;text-align:center;top:289.84px;font-size:12px;line-height:12px;color:#fff;letter-spacing:0px;">67</div>
<div class="t" style="left:190.86px;width:200px;text-align:center;top:289.84px;font-size:12px;line-height:12px;color:#fff;letter-spacing:0px;">68</div>
<div class="t" style="left:233.31px;width:200px;text-align:center;top:289.84px;font-size:12px;line-height:12px;color:#fff;letter-spacing:0px;">69</div>
<div class="t" style="left:275.76px;width:200px;text-align:center;top:289.84px;font-size:12px;line-height:12px;color:#fff;letter-spacing:0px;">70</div>
<div class="t" style="left:318.21px;width:200px;text-align:center;top:289.84px;font-size:12px;line-height:12px;color:#fff;letter-spacing:0px;">71</div>
<div class="t" style="left:360.66px;width:200px;text-align:center;top:289.84px;font-size:12px;line-height:12px;color:#fff;letter-spacing:0px;">72</div>
<div class="t" style="left:403.11px;width:200px;text-align:center;top:289.84px;font-size:12px;line-height:12px;color:#fff;letter-spacing:0px;">73</div>
<div class="t" style="left:445.56px;width:200px;text-align:center;top:289.84px;font-size:12px;line-height:12px;color:#fff;letter-spacing:0px;">74</div>
<div class="t" style="left:488.01px;width:200px;text-align:center;top:289.84px;font-size:12px;line-height:12px;color:#fff;letter-spacing:0px;">75</div>
<div class="t" style="left:530.46px;width:200px;text-align:center;top:289.84px;font-size:12px;line-height:12px;color:#fff;letter-spacing:0px;">76</div>
<div class="t" style="left:572.91px;width:200px;text-align:center;top:289.84px;font-size:12px;line-height:12px;color:#fff;letter-spacing:0px;">77</div>
<div class="t" style="left:615.36px;width:200px;text-align:center;top:289.84px;font-size:12px;line-height:12px;color:#fff;letter-spacing:0px;">78</div>
<div class="t" style="left:657.81px;width:200px;text-align:center;top:289.84px;font-size:12px;line-height:12px;color:#fff;letter-spacing:0px;">79</div>
<div class="t" style="left:700.26px;width:200px;text-align:center;top:289.84px;font-size:12px;line-height:12px;color:#fff;letter-spacing:0px;">80</div>
<div class="t" style="left:742.71px;width:200px;text-align:center;top:289.84px;font-size:12px;line-height:12px;color:#fff;letter-spacing:0px;">81</div>
<div class="t" style="left:785.16px;width:200px;text-align:center;top:289.84px;font-size:12px;line-height:12px;color:#fff;letter-spacing:0px;">82</div>
<div class="t" style="left:817.00px;width:200px;text-align:center;top:289.84px;font-size:12px;line-height:12px;color:#fff;letter-spacing:0px;">83</div>
<div style="position:absolute;left:20px;top:53px;width:45px;height:24px;background:#262626;"></div>
<div class="t" style="left:18.3px;top:184px;width:0;height:0;"><div class="t" style="transform:translate(-50%,-50%) rotate(-90deg);font-size:12.5px;line-height:12.5px;color:#fff;left:0;top:0;letter-spacing:-0.669px">AMPLITUDE (dBm)</div></div>
<svg style="left:0;top:0" width="1180" height="320" viewBox="0 0 1180 320">
<circle cx="1050.6" cy="185.5" r="95.7" fill="#000"/>
<line x1="1050.6" y1="123.0" x2="1050.6" y2="117.5" stroke="#f0f0f0" stroke-width="1"/>
<line x1="1081.8" y1="131.4" x2="1084.6" y2="126.6" stroke="#f0f0f0" stroke-width="1"/>
<line x1="1104.7" y1="154.2" x2="1109.5" y2="151.5" stroke="#f0f0f0" stroke-width="1"/>
<line x1="1113.1" y1="185.5" x2="1118.6" y2="185.5" stroke="#f0f0f0" stroke-width="1"/>
<line x1="1104.7" y1="216.8" x2="1109.5" y2="219.5" stroke="#f0f0f0" stroke-width="1"/>
<line x1="1081.8" y1="239.6" x2="1084.6" y2="244.4" stroke="#f0f0f0" stroke-width="1"/>
<line x1="1050.6" y1="248.0" x2="1050.6" y2="253.5" stroke="#f0f0f0" stroke-width="1"/>
<line x1="1019.3" y1="239.6" x2="1016.6" y2="244.4" stroke="#f0f0f0" stroke-width="1"/>
<line x1="996.5" y1="216.8" x2="991.7" y2="219.5" stroke="#f0f0f0" stroke-width="1"/>
<line x1="988.1" y1="185.5" x2="982.6" y2="185.5" stroke="#f0f0f0" stroke-width="1"/>
<line x1="996.5" y1="154.2" x2="991.7" y2="151.5" stroke="#f0f0f0" stroke-width="1"/>
<line x1="1019.3" y1="131.4" x2="1016.6" y2="126.6" stroke="#f0f0f0" stroke-width="1"/>
<line x1="1007.3" y1="167.2" x2="994.9" y2="162.0" stroke="#f4f400" stroke-width="1.6"/>
</svg>
<div class="t" style="left:1046.40px;top:104.69px;font-size:11px;line-height:11px;color:#fff;letter-spacing:0.000px;">N</div>
<div class="t" style="left:1002.70px;top:111.79px;font-size:11px;line-height:11px;color:#fff;letter-spacing:-0.384px;">330</div>
<div class="t" style="left:1082.30px;top:112.99px;font-size:11px;line-height:11px;color:#fff;letter-spacing:-0.067px;">30</div>
<div class="t" style="left:973.60px;top:139.99px;font-size:11px;line-height:11px;color:#fff;letter-spacing:-0.250px;">300</div>
<div class="t" style="left:1111.00px;top:140.49px;font-size:11px;line-height:11px;color:#fff;letter-spacing:-0.067px;">60</div>
<div class="t" style="left:971.00px;top:179.89px;font-size:11px;line-height:11px;color:#fff;letter-spacing:0.000px;">W</div>
<div class="t" style="left:1119.60px;top:179.89px;font-size:11px;line-height:11px;color:#fff;letter-spacing:0.000px;">E</div>
<div class="t" style="left:973.60px;top:218.69px;font-size:11px;line-height:11px;color:#fff;letter-spacing:-0.250px;">240</div>
<div class="t" style="left:1111.00px;top:218.69px;font-size:11px;line-height:11px;color:#fff;letter-spacing:-0.350px;">120</div>
<div class="t" style="left:1003.20px;top:246.59px;font-size:11px;line-height:11px;color:#fff;letter-spacing:-0.184px;">210</div>
<div class="t" style="left:1081.70px;top:246.59px;font-size:11px;line-height:11px;color:#fff;letter-spacing:-0.350px;">150</div>
<div class="t" style="left:1047.20px;top:253.79px;font-size:11px;line-height:11px;color:#fff;letter-spacing:0.000px;">S</div>
<div class="t" style="left:1023.80px;top:172.44px;font-size:27px;line-height:27px;color:#f4f400;letter-spacing:0.628px;">292.9</div>
<div class="t" style="left:154.10px;top:316.32px;font-size:12.5px;line-height:12.5px;color:#fff;letter-spacing:-0.461px;">MODULATION</div>
<div style="position:absolute;left:29.4px;top:330px;width:304.4px;height:77.6px;box-sizing:border-box;border:1.6px solid #fff;border-radius:4px;"></div>
<div style="position:absolute;left:42.7px;top:343.2px;width:37.8px;height:27.2px;box-sizing:border-box;border:1.5px solid #0e0e0e;border-radius:1.5px;background:#51545a;box-shadow:0 0 1px 0.5px rgba(0,0,0,.5);"></div>
<div class="t" style="left:53.80px;top:352.16px;font-size:9.5px;line-height:9.5px;color:#fff;letter-spacing:0.463px;font-weight:bold;">AM</div>
<div style="position:absolute;left:90.7px;top:343.2px;width:37.8px;height:27.2px;box-sizing:border-box;border:1.5px solid #0e0e0e;border-radius:1.5px;background:#51545a;box-shadow:0 0 1px 0.5px rgba(0,0,0,.5);"></div>
<div class="t" style="left:102.20px;top:352.16px;font-size:9.5px;line-height:9.5px;color:#fff;letter-spacing:-0.314px;font-weight:bold;">CW</div>
<div style="position:absolute;left:138.7px;top:343.2px;width:37.8px;height:27.2px;box-sizing:border-box;border:1.5px solid #0e0e0e;border-radius:1.5px;background:#3b3e43;box-shadow:0 0 1px 0.5px rgba(0,0,0,.5);"></div>
<div class="t" style="left:150.50px;top:352.16px;font-size:9.5px;line-height:9.5px;color:#fff;letter-spacing:0.742px;font-weight:bold;">FM</div>
<div style="position:absolute;left:187.7px;top:343.2px;width:37.8px;height:27.2px;box-sizing:border-box;border:1.5px solid #0e0e0e;border-radius:1.5px;background:#51545a;box-shadow:0 0 1px 0.5px rgba(0,0,0,.5);"></div>
<div class="t" style="left:198.30px;top:352.16px;font-size:9.5px;line-height:9.5px;color:#fff;letter-spacing:-0.633px;font-weight:bold;">LSB</div>
<div style="position:absolute;left:235.5px;top:343.2px;width:37.8px;height:27.2px;box-sizing:border-box;border:1.5px solid #0e0e0e;border-radius:1.5px;background:#51545a;box-shadow:0 0 1px 0.5px rgba(0,0,0,.5);"></div>
<div class="t" style="left:246.00px;top:352.16px;font-size:9.5px;line-height:9.5px;color:#fff;letter-spacing:-0.711px;font-weight:bold;">SSB</div>
<div style="position:absolute;left:284.9px;top:343.2px;width:37.8px;height:27.2px;box-sizing:border-box;border:1.5px solid #0e0e0e;border-radius:1.5px;background:#51545a;box-shadow:0 0 1px 0.5px rgba(0,0,0,.5);"></div>
<div class="t" style="left:294.50px;top:352.16px;font-size:9.5px;line-height:9.5px;color:#fff;letter-spacing:-0.619px;font-weight:bold;">USB</div>
<div style="position:absolute;left:52px;top:379.9px;width:20px;height:20px;box-sizing:border-box;border-radius:50%;border:2px solid #fff;background:#868200;box-shadow:1.5px 2px 3px rgba(150,150,150,.4);"></div>
<div style="position:absolute;left:99.8px;top:379.9px;width:20px;height:20px;box-sizing:border-box;border-radius:50%;border:2px solid #fff;background:#868200;box-shadow:1.5px 2px 3px rgba(150,150,150,.4);"></div>
<div style="position:absolute;left:148px;top:379.9px;width:20px;height:20px;box-sizing:border-box;border-radius:50%;border:2px solid #fff;background:#ffff00;box-shadow:1.5px 2px 3px rgba(150,150,150,.4);"></div>
<div style="position:absolute;left:197px;top:379.9px;width:20px;height:20px;box-sizing:border-box;border-radius:50%;border:2px solid #fff;background:#868200;box-shadow:1.5px 2px 3px rgba(150,150,150,.4);"></div>
<div style="position:absolute;left:245px;top:379.9px;width:20px;height:20px;box-sizing:border-box;border-radius:50%;border:2px solid #fff;background:#868200;box-shadow:1.5px 2px 3px rgba(150,150,150,.4);"></div>
<div style="position:absolute;left:294px;top:379.9px;width:20px;height:20px;box-sizing:border-box;border-radius:50%;border:2px solid #fff;background:#868200;box-shadow:1.5px 2px 3px rgba(150,150,150,.4);"></div>
<div class="t" style="left:365.80px;top:306.44px;font-size:12px;line-height:12px;color:#fff;letter-spacing:-0.590px;">STARE MHz</div>
<div class="t" style="left:487.20px;top:306.44px;font-size:12px;line-height:12px;color:#fff;letter-spacing:-0.647px;">FREQUENCY (MHz)</div>
<div style="position:absolute;left:363px;top:321px;width:60px;height:37.6px;box-sizing:border-box;background:#000;border:2px solid #a4a4a4;box-shadow:inset 1px 1px 0 #3a3a3a;"></div>
<div class="t" style="left:385.60px;top:326.60px;font-size:28px;line-height:28px;color:#f4f400;letter-spacing:0.879px;">20</div>
<div style="position:absolute;left:466.4px;top:321px;width:148.3px;height:37.6px;box-sizing:border-box;background:#000;border:2px solid #a4a4a4;box-shadow:inset 1px 1px 0 #3a3a3a;"></div>
<div class="t" style="left:525.80px;top:326.60px;font-size:28px;line-height:28px;color:#f4f400;letter-spacing:-0.322px;">72.750</div>
<div style="position:absolute;left:449.3px;top:321px;width:17px;height:37.6px;background:#a6a6a6;"></div>
<div style="position:absolute;left:449.3px;top:339.5px;width:17px;height:1.5px;background:#e0e0e0;"></div>
<svg style="left:449.3px;top:321px" width="17" height="37" viewBox="0 0 17 37"><path d="M8.5 3 L15 15 L2 15 Z" fill="#cfcfcf"/><path d="M8.5 34 L15 22.5 L2 22.5 Z" fill="#cfcfcf"/><rect x="0" y="0" width="17" height="1" fill="#c8c8c8"/><rect x="0" y="36" width="17" height="1" fill="#8a8a8a"/></svg>
<div class="btn" style="left:358.7px;top:375.6px;width:75.8px;height:27.6px;"></div>
<svg style="left:365px;top:379px" width="22" height="22" viewBox="0 0 22 22"><rect x="0.5" y="0.5" width="21" height="21" rx="3.5" fill="#e9e9e9" stroke="#c6c6c6" stroke-width="1"/><rect x="1.5" y="1.5" width="19" height="19" rx="3" fill="none" stroke="#f6f6f6" stroke-width="1"/><path d="M7.8 10.5 V8.6 A3.2 3.2 0 0 1 14.2 8.6 V10.5" fill="none" stroke="#a9a9a9" stroke-width="1.7"/><rect x="6.3" y="10" width="9.4" height="6.3" rx="0.6" fill="#a9a9a9"/></svg>
<div class="t" style="left:396.20px;top:385.42px;font-size:12.5px;line-height:12.5px;color:#000;letter-spacing:-0.426px;">Lock</div>
<div class="btn" style="left:447.2px;top:375.6px;width:76px;height:27.6px;"></div>
<svg style="left:0;top:0" width="1180" height="765" viewBox="0 0 1180 765"><defs><linearGradient id="gg464389" x1="0.3" y1="0" x2="0.6" y2="1"><stop offset="0" stop-color="#7f8ec2"/><stop offset="0.45" stop-color="#b2b8dc"/><stop offset="1" stop-color="#d8cfea"/></linearGradient></defs><ellipse cx="465.5" cy="401.20000000000005" rx="8" ry="1.8" fill="rgba(0,0,0,.13)"/><polygon points="462.32,381.07 462.78,378.23 466.22,378.23 466.68,381.07 468.99,382.03 471.33,380.34 473.76,382.77 472.07,385.11 473.03,387.42 475.87,387.88 475.87,391.32 473.03,391.78 472.07,394.09 473.76,396.43 471.33,398.86 468.99,397.17 466.68,398.13 466.22,400.97 462.78,400.97 462.32,398.13 460.01,397.17 457.67,398.86 455.24,396.43 456.93,394.09 455.97,391.78 453.13,391.32 453.13,387.88 455.97,387.42 456.93,385.11 455.24,382.77 457.67,380.34 460.01,382.03" fill="url(#gg464389)" stroke="#5c6790" stroke-width="1" stroke-linejoin="round"/><circle cx="464.5" cy="389.6" r="3.2" fill="#dedede" stroke="#5c6790" stroke-width="1"/></svg>
<div class="t" style="left:480.00px;top:385.42px;font-size:12.5px;line-height:12.5px;color:#000;letter-spacing:-0.904px;">Sweep</div>
<div class="btn" style="left:536.8px;top:375.6px;width:75.8px;height:27.6px;"></div>
<svg style="left:545px;top:380.5px" width="20" height="19" viewBox="0 0 20 19"><defs><linearGradient id="ga" x1="0" y1="0" x2="0.25" y2="1"><stop offset="0" stop-color="#9ad868"/><stop offset="0.5" stop-color="#4fa41c"/><stop offset="1" stop-color="#7ac840"/></linearGradient></defs><path d="M0.8 4.9 H7.3 V0.6 L18.8 9.4 L7.3 18.3 V14.1 H0.8 Z" fill="url(#ga)" stroke="#8ccc5c" stroke-width="0.9" stroke-linejoin="round"/></svg>
<div class="t" style="left:569.40px;top:385.42px;font-size:12.5px;line-height:12.5px;color:#000;letter-spacing:-0.944px;">Sweep</div>
<div class="btn" style="left:626.9px;top:375.6px;width:75.6px;height:27.6px;"></div>
<svg style="left:632px;top:378px" width="26" height="24" viewBox="0 0 26 24"><defs><radialGradient id="gl" cx="0.4" cy="0.35" r="0.75"><stop offset="0" stop-color="#eaf2fb"/><stop offset="1" stop-color="#b4cdec"/></radialGradient></defs><ellipse cx="9.5" cy="20.2" rx="6" ry="1.4" fill="rgba(0,0,0,.08)"/><path d="M15 14.2 L21.6 19.9" stroke="#8a8a8a" stroke-width="3.4" stroke-linecap="round"/><path d="M15.6 14.8 L21.4 19.7" stroke="#cfcfcf" stroke-width="1.5" stroke-linecap="round"/><circle cx="9.7" cy="8.8" r="7.3" fill="#6f9fd8" stroke="#c6c6c6" stroke-width="1.9"/><circle cx="9.7" cy="8.8" r="8.2" fill="none" stroke="#adadad" stroke-width="0.5"/><circle cx="9.7" cy="8.8" r="5.5" fill="url(#gl)"/></svg>
<div class="t" style="left:663.50px;top:385.42px;font-size:12.5px;line-height:12.5px;color:#000;letter-spacing:-1.023px;">Peak</div>
<div class="btn" style="left:447.2px;top:415.8px;width:76px;height:27.4px;"></div>
<svg style="left:0;top:0" width="1180" height="765" viewBox="0 0 1180 765"><defs><linearGradient id="gg464429" x1="0.3" y1="0" x2="0.6" y2="1"><stop offset="0" stop-color="#7f8ec2"/><stop offset="0.45" stop-color="#b2b8dc"/><stop offset="1" stop-color="#d8cfea"/></linearGradient></defs><ellipse cx="465.5" cy="441.20000000000005" rx="8" ry="1.8" fill="rgba(0,0,0,.13)"/><polygon points="462.32,421.07 462.78,418.23 466.22,418.23 466.68,421.07 468.99,422.03 471.33,420.34 473.76,422.77 472.07,425.11 473.03,427.42 475.87,427.88 475.87,431.32 473.03,431.78 472.07,434.09 473.76,436.43 471.33,438.86 468.99,437.17 466.68,438.13 466.22,440.97 462.78,440.97 462.32,438.13 460.01,437.17 457.67,438.86 455.24,436.43 456.93,434.09 455.97,431.78 453.13,431.32 453.13,427.88 455.97,427.42 456.93,425.11 455.24,422.77 457.67,420.34 460.01,422.03" fill="url(#gg464429)" stroke="#5c6790" stroke-width="1" stroke-linejoin="round"/><circle cx="464.5" cy="429.6" r="3.2" fill="#dedede" stroke="#5c6790" stroke-width="1"/></svg>
<div class="t" style="left:488.00px;top:424.62px;font-size:12.5px;line-height:12.5px;color:#000;letter-spacing:-1.277px;">FOI</div>
<div class="btn" style="left:536.8px;top:415.8px;width:75.8px;height:27.4px;"></div>
<svg style="left:0;top:0" width="1180" height="765" viewBox="0 0 1180 765"><defs><linearGradient id="gs" x1="0" y1="0" x2="0.3" y2="1"><stop offset="0" stop-color="#86cc4c"/><stop offset="0.55" stop-color="#4fa41c"/><stop offset="1" stop-color="#74c43c"/></linearGradient></defs><ellipse cx="556" cy="437" rx="7" ry="1.4" fill="rgba(0,0,0,.1)"/><path d="M544.2 433.2 C544.4 425 548.5 420 553.6 420 C559 420 561.7 424 561.7 429.1 L565.9 429.1 L557.9 436.3 L549.5 429.4 L555.3 429.2 C555.3 426.4 553.8 424.5 551.4 424.5 C548 424.5 545.6 428 544.2 433.2 Z" fill="url(#gs)" stroke="#7cc44a" stroke-width="0.7" stroke-linejoin="round"/></svg>
<div class="t" style="left:573.20px;top:424.62px;font-size:12.5px;line-height:12.5px;color:#000;letter-spacing:-1.023px;">Scan</div>
<div class="t" style="left:782.30px;top:310.04px;font-size:12px;line-height:12px;color:#fff;letter-spacing:-0.332px;">AMPLITUDE (dBm)</div>
<div style="position:absolute;left:724.9px;top:324.8px;width:192.2px;height:81.2px;box-sizing:border-box;background:#000;border:2px solid #fff;"></div>
<svg style="left:0;top:0" width="1180" height="765" viewBox="0 0 1180 765">
<line x1="746.3" y1="365.2" x2="750.8" y2="369.9" stroke="#f0f0f0" stroke-width="1"/>
<line x1="768.1" y1="350.7" x2="771.9" y2="355.9" stroke="#f0f0f0" stroke-width="1"/>
<line x1="792.9" y1="342.5" x2="794.8" y2="347.5" stroke="#f0f0f0" stroke-width="1"/>
<line x1="819.4" y1="339.1" x2="819.4" y2="344.7" stroke="#f0f0f0" stroke-width="1"/>
<line x1="845.5" y1="342.5" x2="844" y2="347.5" stroke="#f0f0f0" stroke-width="1"/>
<line x1="870.7" y1="351.3" x2="867.3" y2="355.9" stroke="#f0f0f0" stroke-width="1"/>
<line x1="893" y1="365.2" x2="888" y2="369.9" stroke="#f0f0f0" stroke-width="1"/>
<polygon points="778.1,357 778.9,357 784.1,365.4 782.6,367 780.3,366.4" fill="#f4f400"/>
</svg>
<div class="t" style="left:727.00px;top:349.04px;font-size:12px;line-height:12px;color:#fff;letter-spacing:-0.354px;">-120</div>
<div class="t" style="left:751.30px;top:334.04px;font-size:12px;line-height:12px;color:#fff;letter-spacing:-0.179px;">-100</div>
<div class="t" style="left:783.50px;top:327.04px;font-size:12px;line-height:12px;color:#fff;letter-spacing:-0.081px;">-80</div>
<div class="t" style="left:811.00px;top:325.04px;font-size:12px;line-height:12px;color:#fff;letter-spacing:-0.247px;">-60</div>
<div class="t" style="left:839.00px;top:327.04px;font-size:12px;line-height:12px;color:#fff;letter-spacing:-0.247px;">-40</div>
<div class="t" style="left:867.00px;top:335.04px;font-size:12px;line-height:12px;color:#fff;letter-spacing:-0.247px;">-20</div>
<div class="t" style="left:895.00px;top:353.04px;font-size:12px;line-height:12px;color:#fff;letter-spacing:0.000px;">0</div>
<div class="t" style="left:789.50px;top:372.52px;font-size:27.5px;line-height:27.5px;color:#f4f400;letter-spacing:0.125px;">-95.2</div>
<svg style="left:0;top:0" width="1180" height="765" viewBox="0 0 1180 765" fill="none">
<path d="M976 356.6 V335.2" stroke="#0b7dcc" stroke-width="4.2"/>
<path d="M976 341.5 C976 336.5 979 335.2 984 335.2 H989.5 C995 335.2 997.4 336.8 997.4 341.5 V356.6" stroke="#0b7dcc" stroke-width="4.2"/>
<path d="M997.4 341.5 C997.4 336.8 1000 335.2 1005 335.2 H1010.5 C1016.5 335.2 1018.9 336.8 1018.9 341.5 V356.6" stroke="#0b7dcc" stroke-width="4.2"/>
<path d="M1027.5 335.2 H1044 C1049 335.2 1050.9 337 1050.9 341 V356.6" stroke="#0b7dcc" stroke-width="4.2"/>
<path d="M1050.9 345 H1033 C1028.5 345 1027.1 346.6 1027.1 349.6 C1027.1 352.8 1028.5 354.4 1033 354.4 H1050.9" stroke="#0b7dcc" stroke-width="4.2"/>
<path d="M1085.5 335.2 H1064.8999999999999 C1060.8999999999999 335.2 1059.8999999999999 336.8 1059.8999999999999 340 C1059.8999999999999 343.6 1060.8999999999999 344.9 1064.8999999999999 344.9 H1078.4 C1082.4 344.9 1083.4 346.4 1083.4 349.6 C1083.4 353 1082.4 354.4 1078.4 354.4 H1057.8" stroke="#0b7dcc" stroke-width="4.2"/>
<path d="M1118.0 335.2 H1097.1 C1093.1 335.2 1092.1 336.8 1092.1 340 C1092.1 343.6 1093.1 344.9 1097.1 344.9 H1110.9 C1114.9 344.9 1115.9 346.4 1115.9 349.6 C1115.9 353 1114.9 354.4 1110.9 354.4 H1090.0" stroke="#0b7dcc" stroke-width="4.2"/>
<path d="M1105 314 H1130.4 V338 C1127 327 1118 318.5 1105 314 Z" fill="#f5b82e"/>
<rect x="1119.5" y="317.2" width="11.0" height="1" fill="#262626" opacity="0.75"/>
<rect x="1120.4" y="319.6" width="10.1" height="1" fill="#262626" opacity="0.75"/>
<rect x="1121.3" y="322" width="9.2" height="1" fill="#262626" opacity="0.75"/>
<rect x="1122.2" y="324.4" width="8.3" height="1" fill="#262626" opacity="0.75"/>
<rect x="1123.1" y="326.8" width="7.4" height="1" fill="#262626" opacity="0.75"/>
<rect x="1124.0" y="329.2" width="6.5" height="1" fill="#262626" opacity="0.75"/>
<rect x="1124.9" y="331.6" width="5.6" height="1" fill="#262626" opacity="0.75"/>
<rect x="1125.8" y="334" width="4.7" height="1" fill="#262626" opacity="0.75"/>
</svg>
<div class="btn" style="left:964.6px;top:376.6px;width:76px;height:28px;"></div>
<svg style="left:974px;top:383px" width="16" height="16" viewBox="0 0 16 16"><defs><radialGradient id="gr" cx="0.4" cy="0.3" r="0.8"><stop offset="0" stop-color="#ff6a6a"/><stop offset="0.6" stop-color="#ee2222"/><stop offset="1" stop-color="#cc1010"/></radialGradient></defs><circle cx="8" cy="8" r="7.2" fill="url(#gr)" stroke="#d42a2a" stroke-width="0.8"/></svg>
<div class="t" style="left:995.20px;top:386.42px;font-size:12.5px;line-height:12.5px;color:#000;letter-spacing:-0.665px;">Record</div>
<div class="btn" style="left:1060.5px;top:376.6px;width:76px;height:28px;border-color:#666;background:linear-gradient(#666 0%,#626262 53%,#5a5a5a 55%,#5c5c5c 100%);box-shadow:0 0 2px 0.6px rgba(110,110,110,.5),0.5px 1px 4px 3px rgba(0,0,0,.6);"></div>
<svg style="left:1066px;top:380px" width="23" height="23" viewBox="0 0 23 23"><circle cx="11.5" cy="11.5" r="10.6" fill="#465269" stroke="#6f7888" stroke-width="1.2"/><circle cx="11.5" cy="11.5" r="8.6" fill="none" stroke="#3e4a62" stroke-width="0.8"/><text x="11.5" y="16.4" text-anchor="middle" font-family="Liberation Sans, sans-serif" font-weight="bold" font-size="14" fill="#7d8696">?</text></svg>
<div class="t" style="left:1091.20px;top:386.42px;font-size:12.5px;line-height:12.5px;color:#141414;letter-spacing:-0.481px;">Analyse</div>
<div class="btn" style="left:19.6px;top:464.5px;width:113.9px;height:28px;"></div>
<svg style="left:27.4px;top:467px" width="21" height="21" viewBox="0 0 21 21"><defs><linearGradient id="gb" x1="0" y1="0" x2="0.4" y2="1"><stop offset="0" stop-color="#b4d2f0"/><stop offset="0.5" stop-color="#6fa4de"/><stop offset="1" stop-color="#4a86cc"/></linearGradient></defs><ellipse cx="11" cy="20.4" rx="7" ry="1.2" fill="rgba(0,0,0,.1)"/><g><path d="M0.9 10 C0.9 4.4 5.4 0.8 10.4 0.8 C13.2 0.8 15.4 1.8 16.9 3.2 L19.3 0.7 L19.5 9.6 L10.6 9.5 L13.3 6.7 C12.5 5.9 11.5 5.5 10.3 5.5 C7.7 5.5 5.9 7.3 5.7 10 Z" fill="url(#gb)" stroke="#5a94d6" stroke-width="0.7" stroke-linejoin="round"/><path d="M2.4 8.6 C3 4.8 6.4 2.3 10.4 2.3 C12.6 2.3 14.6 3.1 16 4.4" fill="none" stroke="#d4e6f8" stroke-width="0.9" opacity="0.8"/></g><g transform="rotate(180 10.2 10.3)"><path d="M0.9 10 C0.9 4.4 5.4 0.8 10.4 0.8 C13.2 0.8 15.4 1.8 16.9 3.2 L19.3 0.7 L19.5 9.6 L10.6 9.5 L13.3 6.7 C12.5 5.9 11.5 5.5 10.3 5.5 C7.7 5.5 5.9 7.3 5.7 10 Z" fill="url(#gb)" stroke="#5a94d6" stroke-width="0.7" stroke-linejoin="round"/><path d="M2.4 8.6 C3 4.8 6.4 2.3 10.4 2.3 C12.6 2.3 14.6 3.1 16 4.4" fill="none" stroke="#d4e6f8" stroke-width="0.9" opacity="0.8"/></g></svg>
<div class="t" style="left:53.70px;top:473.62px;font-size:12.5px;line-height:12.5px;color:#000;letter-spacing:-0.320px;">Date/Time Sort</div>
<div class="t" style="left:171.00px;top:474.04px;font-size:12px;line-height:12px;color:#fff;letter-spacing:-0.480px;">SOI File</div>
<div style="position:absolute;left:215.6px;top:464.6px;width:220.8px;height:28.6px;box-sizing:border-box;border:1.6px solid #fff;border-radius:3.5px;background:#e2e2e2;box-shadow:0 0 2px 0.6px rgba(190,190,190,.55),1px 1.5px 4px 2px rgba(0,0,0,.75);"></div>
<div style="position:absolute;left:221.2px;top:469.2px;width:186.6px;height:19.8px;box-sizing:border-box;background:#fff;border:1px solid #8c8c8c;border-right-color:#d8d8d8;border-bottom-color:#e8e8e8;"></div>
<div style="position:absolute;left:222.2px;top:470.2px;width:9.6px;height:17.8px;background:#cacaca;"></div>
<svg style="left:222.5px;top:473px" width="9" height="13" viewBox="0 0 9 13" shape-rendering="crispEdges"><rect x="0.5" y="0.5" width="3" height="3" fill="#fff" stroke="#000"/><rect x="4.5" y="8.5" width="3" height="3" fill="#fff" stroke="#000"/><path d="M2.5 4 V6.5 H6.5 V8" fill="none" stroke="#000"/></svg>
<div class="t" style="left:234.40px;top:474.04px;font-size:12px;line-height:12px;color:#000;letter-spacing:-0.125px;">Y:\...\Brit Vx 1 on 72.75 MHz.txt</div>
<div style="position:absolute;left:411.3px;top:469.6px;width:19.6px;height:19.6px;box-sizing:border-box;border:1px solid #9a9a9a;border-radius:3.5px;background:linear-gradient(#f4f4f4,#e0e0e0);"></div>
<svg style="left:414px;top:473.5px" width="15" height="12" viewBox="0 0 15 12"><path d="M0.6 11.2 V1.6 Q0.6 0.7 1.5 0.7 H4.6 L5.8 2 H10.2 Q11 2 11 2.9 V4.6" fill="#b8860b" stroke="#6a4c06" stroke-width="0.9" stroke-linejoin="round"/><path d="M0.7 11.3 L3.2 4.6 H14.3 L11.6 11.3 Z" fill="#a87a08" stroke="#5a4004" stroke-width="0.9" stroke-linejoin="round"/></svg>
<div class="btn" style="left:443.7px;top:464.8px;width:75.7px;height:28.2px;"></div>
<svg style="left:452px;top:468px" width="22" height="22" viewBox="0 0 22 22"><defs><linearGradient id="gp" x1="0" y1="0" x2="1" y2="1"><stop offset="0" stop-color="#ececec"/><stop offset="1" stop-color="#fdfdfd"/></linearGradient><radialGradient id="gst"><stop offset="0" stop-color="#ffffc0"/><stop offset="0.45" stop-color="#f6ee3c"/><stop offset="1" stop-color="#f0e840" stop-opacity="0"/></radialGradient></defs><rect x="1.2" y="1.6" width="16.6" height="20" rx="1" fill="rgba(0,0,0,.12)"/><rect x="0.8" y="1" width="16.6" height="20" rx="1" fill="url(#gp)" stroke="#9c9c9c" stroke-width="0.9"/><circle cx="15.4" cy="5" r="5.2" fill="url(#gst)"/></svg>
<div class="t" style="left:482.80px;top:474.02px;font-size:12.5px;line-height:12.5px;color:#000;letter-spacing:-0.469px;">New</div>
<div class="btn" style="left:532.6px;top:464.8px;width:75.7px;height:28.2px;"></div>
<svg style="left:538px;top:467px" width="24" height="23" viewBox="0 0 24 23"><defs><linearGradient id="gd" x1="0" y1="0" x2="0" y2="1"><stop offset="0" stop-color="#dcdcdc"/><stop offset="1" stop-color="#a8a8a8"/></linearGradient><linearGradient id="gba" x1="0" y1="0" x2="0" y2="1"><stop offset="0" stop-color="#7fb0e8"/><stop offset="1" stop-color="#2f6fc4"/></linearGradient></defs><path d="M5.2 7 H18.8 L23 15.8 V21.4 Q23 22.3 22 22.3 H2 Q1 22.3 1 21.4 V15.8 Z" fill="url(#gd)" stroke="#8a8a8a" stroke-width="0.9" stroke-linejoin="round"/><rect x="2.6" y="16.6" width="18.8" height="4.2" rx="0.6" fill="#efefef" stroke="#909090" stroke-width="0.6"/><rect x="4" y="18" width="7" height="1.4" fill="#aaa"/><rect x="12.2" y="17.2" width="1" height="3" fill="#555"/><path d="M2.4 6.4 C3.4 2.6 6.4 0.8 9.6 0.8 C13 0.8 15 3.4 15.2 7.8 L18.2 7.8 L12.3 15 L6.2 7.9 L9.6 7.9 C9.4 5.8 8.4 4.6 6.8 4.6 C5 4.6 3.6 5.2 2.4 6.4 Z" fill="url(#gba)" stroke="#3a72bc" stroke-width="0.7" stroke-linejoin="round"/></svg>
<div class="t" style="left:562.60px;top:474.02px;font-size:12.5px;line-height:12.5px;color:#000;letter-spacing:-0.752px;">Save As</div>
<div style="position:absolute;left:677.6px;top:464.6px;width:123.8px;height:28.6px;box-sizing:border-box;border:1.6px solid #fff;border-radius:3.5px;background:#e2e2e2;box-shadow:0 0 2px 0.6px rgba(190,190,190,.55),1px 1.5px 4px 2px rgba(0,0,0,.75);"></div>
<div style="position:absolute;left:683.2px;top:469.2px;width:95.4px;height:19.6px;box-sizing:border-box;background:#fff;border:1px solid #8c8c8c;border-right-color:#d8d8d8;border-bottom-color:#e8e8e8;"></div>
<div class="t" style="left:687.30px;top:474.04px;font-size:12px;line-height:12px;color:#000;letter-spacing:-0.399px;">ACREP / TTO</div>
<div style="position:absolute;left:782.8px;top:472.8px;width:13px;height:13.2px;box-sizing:border-box;border:1px solid #9a9a9a;border-radius:2.5px;background:linear-gradient(#f6f6f6,#e2e2e2);"></div>
<svg style="left:785.8px;top:477.6px" width="7" height="4" viewBox="0 0 7 4"><path d="M0 0 H7 L3.5 4 Z" fill="#444"/></svg>
<div class="btn" style="left:820.2px;top:465.6px;width:77.2px;height:27.8px;"></div>
<svg style="left:826.6px;top:468.2px" width="24" height="22" viewBox="0 0 24 22"><defs><radialGradient id="gsta"><stop offset="0" stop-color="#ffffc0"/><stop offset="0.45" stop-color="#f6ee3c"/><stop offset="1" stop-color="#f0e840" stop-opacity="0"/></radialGradient></defs><path d="M1.4 21.4 H20.8" stroke="rgba(0,0,0,.15)" stroke-width="1"/><path d="M0.9 8.4 L7.6 0.8 H12.8 L20.2 8.4 V20.6 H0.9 Z" fill="#e6e6e6" stroke="#adadad" stroke-width="0.9" stroke-linejoin="round"/><path d="M2.8 9.2 L8 2.6 H12.4 L18.2 9.2 L10.5 14 Z" fill="#f3f3f3"/><path d="M0.9 9.6 L10.5 15 L20.2 9.6 V20.6 H0.9 Z" fill="#ededed" stroke="#b4b4b4" stroke-width="0.8" stroke-linejoin="round"/><path d="M0.9 20.6 L8.4 13.8 M20.2 20.6 L12.6 13.8" stroke="#bcbcbc" stroke-width="0.8" fill="none"/><circle cx="16.8" cy="6.2" r="5.2" fill="url(#gsta)"/></svg>
<div class="t" style="left:853.20px;top:474.62px;font-size:12.5px;line-height:12.5px;color:#000;letter-spacing:-0.419px;">Report</div>
<div class="btn" style="left:940.6px;top:464.5px;width:88px;height:28px;"></div>
<svg style="left:947.6px;top:467px" width="24" height="22" viewBox="0 0 24 22"><defs><radialGradient id="gstb"><stop offset="0" stop-color="#ffffc0"/><stop offset="0.45" stop-color="#f6ee3c"/><stop offset="1" stop-color="#f0e840" stop-opacity="0"/></radialGradient></defs><path d="M1.4 21.4 H20.8" stroke="rgba(0,0,0,.15)" stroke-width="1"/><path d="M0.9 8.4 L7.6 0.8 H12.8 L20.2 8.4 V20.6 H0.9 Z" fill="#e6e6e6" stroke="#adadad" stroke-width="0.9" stroke-linejoin="round"/><path d="M2.8 9.2 L8 2.6 H12.4 L18.2 9.2 L10.5 14 Z" fill="#f3f3f3"/><path d="M0.9 9.6 L10.5 15 L20.2 9.6 V20.6 H0.9 Z" fill="#ededed" stroke="#b4b4b4" stroke-width="0.8" stroke-linejoin="round"/><path d="M0.9 20.6 L8.4 13.8 M20.2 20.6 L12.6 13.8" stroke="#bcbcbc" stroke-width="0.8" fill="none"/><circle cx="16.8" cy="6.2" r="5.2" fill="url(#gstb)"/></svg>
<div class="t" style="left:978.30px;top:473.62px;font-size:12.5px;line-height:12.5px;color:#000;letter-spacing:-0.100px;">Submit</div>
<div class="btn" style="left:1078.8px;top:464.5px;width:87.6px;height:28px;"></div>
<svg style="left:1088px;top:471.6px" width="17" height="16" viewBox="0 0 17 16"><defs><linearGradient id="gpl" x1="0" y1="0" x2="0" y2="1"><stop offset="0" stop-color="#a4c8ee"/><stop offset="1" stop-color="#5e98d8"/></linearGradient></defs><path d="M5.6 0.8 H10.8 V5.4 H15.8 V10.2 H10.8 V15 H5.6 V10.2 H0.8 V5.4 H5.6 Z" fill="url(#gpl)" stroke="#6a9cd6" stroke-width="0.9" stroke-linejoin="round"/></svg>
<div class="t" style="left:1127.50px;top:473.62px;font-size:12.5px;line-height:12.5px;color:#000;letter-spacing:-1.011px;">SOI</div>
<div style="position:absolute;left:16.5px;top:506.8px;width:1149.7px;height:247.6px;box-sizing:border-box;border:1.6px solid #fff;border-radius:4px;background:#e1e1e1;box-shadow:1px 2px 4px 1px rgba(0,0,0,.8);"></div>
<div style="position:absolute;left:25.4px;top:515.2px;width:1131.8px;height:229.79999999999995px;box-sizing:border-box;border:1.4px solid #808080;border-right-color:#8c8c8c;border-bottom-color:#949494;background:#fff;"></div>
<div style="position:absolute;left:26.6px;top:516.2px;width:1114px;height:18.4px;background:#c9c9c9;"></div>
<svg style="left:0;top:0" width="1180" height="765" viewBox="0 0 1180 765" shape-rendering="crispEdges">
<line x1="26.6" y1="552.5" x2="1140.5" y2="552.5" stroke="#cdcdcd" stroke-width="1"/>
<line x1="26.6" y1="570.5" x2="1140.5" y2="570.5" stroke="#cdcdcd" stroke-width="1"/>
<line x1="26.6" y1="588.5" x2="1140.5" y2="588.5" stroke="#cdcdcd" stroke-width="1"/>
<line x1="26.6" y1="606.5" x2="1140.5" y2="606.5" stroke="#cdcdcd" stroke-width="1"/>
<line x1="26.6" y1="624.5" x2="1140.5" y2="624.5" stroke="#cdcdcd" stroke-width="1"/>
<line x1="26.6" y1="642.5" x2="1140.5" y2="642.5" stroke="#cdcdcd" stroke-width="1"/>
<line x1="26.6" y1="660.5" x2="1140.5" y2="660.5" stroke="#cdcdcd" stroke-width="1"/>
<line x1="26.6" y1="678.5" x2="1140.5" y2="678.5" stroke="#cdcdcd" stroke-width="1"/>
<line x1="26.6" y1="696.5" x2="1140.5" y2="696.5" stroke="#cdcdcd" stroke-width="1"/>
<line x1="26.6" y1="714.5" x2="1140.5" y2="714.5" stroke="#cdcdcd" stroke-width="1"/>
<line x1="92.5" y1="534.6" x2="92.5" y2="728.3" stroke="#cdcdcd" stroke-width="1"/>
<line x1="145.5" y1="534.6" x2="145.5" y2="728.3" stroke="#cdcdcd" stroke-width="1"/>
<line x1="216.5" y1="534.6" x2="216.5" y2="728.3" stroke="#cdcdcd" stroke-width="1"/>
<line x1="254.5" y1="534.6" x2="254.5" y2="728.3" stroke="#cdcdcd" stroke-width="1"/>
<line x1="362.5" y1="534.6" x2="362.5" y2="728.3" stroke="#cdcdcd" stroke-width="1"/>
<line x1="467.5" y1="534.6" x2="467.5" y2="728.3" stroke="#cdcdcd" stroke-width="1"/>
<line x1="813.5" y1="534.6" x2="813.5" y2="728.3" stroke="#cdcdcd" stroke-width="1"/>
<line x1="884.5" y1="534.6" x2="884.5" y2="728.3" stroke="#cdcdcd" stroke-width="1"/>
<line x1="954.5" y1="534.6" x2="954.5" y2="728.3" stroke="#cdcdcd" stroke-width="1"/>
<line x1="1058.5" y1="534.6" x2="1058.5" y2="728.3" stroke="#cdcdcd" stroke-width="1"/>
<rect x="26.6" y="728.6" width="1114" height="15.2" fill="#f5f5f5"/>
<line x1="26.6" y1="728.5" x2="1140.5" y2="728.5" stroke="#8e8e8e" stroke-width="1"/>
<rect x="1140.5" y="516.2" width="15.6" height="212.4" fill="#f5f5f5"/>
<line x1="1140.5" y1="516.2" x2="1140.5" y2="744" stroke="#a8a8a8" stroke-width="1"/>
<rect x="1141" y="729" width="15" height="14.8" fill="#d3d3d3"/>
<line x1="1141" y1="728.5" x2="1156" y2="728.5" stroke="#a8a8a8" stroke-width="1"/>
</svg>
<svg style="left:0;top:0" width="1180" height="765" viewBox="0 0 1180 765"><rect x="43.4" y="731.4" width="563" height="10.4" rx="4.5" fill="#c9c9c9" stroke="#909090" stroke-width="0.9"/><path d="M38 732.4 V740.4 L31 736.4 Z" fill="#5a5a5a"/><path d="M1127.6 732.4 V740.4 L1135 736.4 Z" fill="#5a5a5a"/><path d="M1144.6 528.2 H1152.6 L1148.6 520.6 Z" fill="#c4c4c4"/><path d="M1144.6 719.6 H1152.6 L1148.6 727 Z" fill="#c4c4c4"/></svg>
<div class="t" style="left:32.3px;top:519.24px;width:59.7px;overflow:hidden;font-size:12px;line-height:12px;height:15px;color:#000;letter-spacing:-0.437px;">Date</div>
<div class="t" style="left:98.3px;top:519.24px;width:46.7px;overflow:hidden;font-size:12px;line-height:12px;height:15px;color:#000;letter-spacing:0.495px;">Time</div>
<div class="t" style="left:151.5px;top:519.24px;width:64.5px;overflow:hidden;font-size:12px;line-height:12px;height:15px;color:#000;letter-spacing:-0.290px;">Freq. (MHz)</div>
<div class="t" style="left:222.3px;top:519.24px;width:31.7px;overflow:hidden;font-size:12px;line-height:12px;height:15px;color:#000;letter-spacing:0.271px;">Mode</div>
<div class="t" style="left:260.1px;top:519.24px;width:101.9px;overflow:hidden;font-size:12px;line-height:12px;height:15px;color:#000;letter-spacing:0.011px;">Callsign To</div>
<div class="t" style="left:367.7px;top:519.24px;width:99.3px;overflow:hidden;font-size:12px;line-height:12px;height:15px;color:#000;letter-spacing:-0.055px;">Callsign From</div>
<div class="t" style="left:473.2px;top:519.24px;width:339.4px;overflow:hidden;font-size:12px;line-height:12px;height:15px;color:#000;letter-spacing:-0.408px;">Gist</div>
<div class="t" style="left:819px;top:519.24px;width:65.0px;overflow:hidden;font-size:12px;line-height:12px;height:15px;color:#000;letter-spacing:-0.205px;">Brg. (deg)</div>
<div class="t" style="left:890px;top:519.24px;width:64.0px;overflow:hidden;font-size:12px;line-height:12px;height:15px;color:#000;letter-spacing:0.220px;">Amp. (dBm)</div>
<div class="t" style="left:960px;top:519.24px;width:98.0px;overflow:hidden;font-size:12px;line-height:12px;height:15px;color:#000;letter-spacing:-1.125px;">MGRS</div>
<div class="t" style="left:1064px;top:519.24px;width:76.3px;overflow:hidden;font-size:12px;line-height:12px;height:15px;color:#000;letter-spacing:-0.049px;">Notes</div>
<div class="t" style="left:32.3px;top:536.54px;width:59.7px;overflow:hidden;font-size:12px;line-height:12px;height:15px;color:#000;letter-spacing:-0.245px;">23/02/2018</div>
<div class="t" style="left:98.3px;top:536.54px;width:46.7px;overflow:hidden;font-size:12px;line-height:12px;height:15px;color:#000;letter-spacing:-0.601px;">00:01:45</div>
<div class="t" style="left:151.5px;top:536.54px;width:64.5px;overflow:hidden;font-size:12px;line-height:12px;height:15px;color:#000;letter-spacing:-0.667px;">72.750</div>
<div class="t" style="left:222.3px;top:536.54px;width:31.7px;overflow:hidden;font-size:12px;line-height:12px;height:15px;color:#000;letter-spacing:-0.162px;">FM</div>
<div class="t" style="left:260.1px;top:536.54px;width:101.9px;overflow:hidden;font-size:12px;line-height:12px;height:15px;color:#000;letter-spacing:-0.094px;">All Stations</div>
<div class="t" style="left:367.7px;top:536.54px;width:99.3px;overflow:hidden;font-size:12px;line-height:12px;height:15px;color:#000;letter-spacing:-0.200px;">IA</div>
<div class="t" style="left:473.2px;top:536.54px;width:339.4px;overflow:hidden;font-size:12px;line-height:12px;height:15px;color:#000;letter-spacing:-0.773px;">Requires SITREP</div>
<div class="t" style="left:819px;top:536.54px;width:65.0px;overflow:hidden;font-size:12px;line-height:12px;height:15px;color:#000;letter-spacing:-0.550px;">148.02</div>
<div class="t" style="left:890px;top:536.54px;width:64.0px;overflow:hidden;font-size:12px;line-height:12px;height:15px;color:#000;letter-spacing:-0.304px;">-78.46</div>
<div class="t" style="left:960px;top:536.54px;width:98.0px;overflow:hidden;font-size:12px;line-height:12px;height:15px;color:#000;letter-spacing:-0.658px;">30UUC6328024575</div>
<div class="t" style="left:32.3px;top:554.54px;width:59.7px;overflow:hidden;font-size:12px;line-height:12px;height:15px;color:#000;letter-spacing:-0.245px;">23/02/2018</div>
<div class="t" style="left:98.3px;top:554.54px;width:46.7px;overflow:hidden;font-size:12px;line-height:12px;height:15px;color:#000;letter-spacing:-0.601px;">00:01:53</div>
<div class="t" style="left:151.5px;top:554.54px;width:64.5px;overflow:hidden;font-size:12px;line-height:12px;height:15px;color:#000;letter-spacing:-0.667px;">72.750</div>
<div class="t" style="left:222.3px;top:554.54px;width:31.7px;overflow:hidden;font-size:12px;line-height:12px;height:15px;color:#000;letter-spacing:-0.162px;">FM</div>
<div class="t" style="left:260.1px;top:554.54px;width:101.9px;overflow:hidden;font-size:12px;line-height:12px;height:15px;color:#000;letter-spacing:-0.200px;">IA</div>
<div class="t" style="left:367.7px;top:554.54px;width:99.3px;overflow:hidden;font-size:12px;line-height:12px;height:15px;color:#000;letter-spacing:-0.200px;">IR</div>
<div class="t" style="left:473.2px;top:554.54px;width:339.4px;overflow:hidden;font-size:12px;line-height:12px;height:15px;color:#000;letter-spacing:-0.149px;">All Clear</div>
<div class="t" style="left:819px;top:554.54px;width:65.0px;overflow:hidden;font-size:12px;line-height:12px;height:15px;color:#000;letter-spacing:-0.550px;">138.71</div>
<div class="t" style="left:890px;top:554.54px;width:64.0px;overflow:hidden;font-size:12px;line-height:12px;height:15px;color:#000;letter-spacing:-0.304px;">-82.39</div>
<div class="t" style="left:960px;top:554.54px;width:98.0px;overflow:hidden;font-size:12px;line-height:12px;height:15px;color:#000;letter-spacing:-0.658px;">30UUC6720427436</div>
<div class="t" style="left:32.3px;top:572.54px;width:59.7px;overflow:hidden;font-size:12px;line-height:12px;height:15px;color:#000;letter-spacing:-0.245px;">23/02/2018</div>
<div class="t" style="left:98.3px;top:572.54px;width:46.7px;overflow:hidden;font-size:12px;line-height:12px;height:15px;color:#000;letter-spacing:-0.601px;">00:02:00</div>
<div class="t" style="left:151.5px;top:572.54px;width:64.5px;overflow:hidden;font-size:12px;line-height:12px;height:15px;color:#000;letter-spacing:-0.667px;">72.750</div>
<div class="t" style="left:222.3px;top:572.54px;width:31.7px;overflow:hidden;font-size:12px;line-height:12px;height:15px;color:#000;letter-spacing:-0.162px;">FM</div>
<div class="t" style="left:260.1px;top:572.54px;width:101.9px;overflow:hidden;font-size:12px;line-height:12px;height:15px;color:#000;letter-spacing:-0.200px;">IA</div>
<div class="t" style="left:367.7px;top:572.54px;width:99.3px;overflow:hidden;font-size:12px;line-height:12px;height:15px;color:#000;letter-spacing:-0.200px;">ID</div>
<div class="t" style="left:473.2px;top:572.54px;width:339.4px;overflow:hidden;font-size:12px;line-height:12px;height:15px;color:#000;letter-spacing:-0.250px;">All (Wedges) are Re-Fuelled</div>
<div class="t" style="left:819px;top:572.54px;width:65.0px;overflow:hidden;font-size:12px;line-height:12px;height:15px;color:#000;letter-spacing:-0.550px;">142.72</div>
<div class="t" style="left:890px;top:572.54px;width:64.0px;overflow:hidden;font-size:12px;line-height:12px;height:15px;color:#000;letter-spacing:-0.304px;">-82.55</div>
<div class="t" style="left:960px;top:572.54px;width:98.0px;overflow:hidden;font-size:12px;line-height:12px;height:15px;color:#000;letter-spacing:-0.658px;">30UUC6574625884</div>
<div class="t" style="left:32.3px;top:590.54px;width:59.7px;overflow:hidden;font-size:12px;line-height:12px;height:15px;color:#000;letter-spacing:-0.245px;">23/02/2018</div>
<div class="t" style="left:98.3px;top:590.54px;width:46.7px;overflow:hidden;font-size:12px;line-height:12px;height:15px;color:#000;letter-spacing:-0.601px;">00:02:07</div>
<div class="t" style="left:151.5px;top:590.54px;width:64.5px;overflow:hidden;font-size:12px;line-height:12px;height:15px;color:#000;letter-spacing:-0.667px;">72.750</div>
<div class="t" style="left:222.3px;top:590.54px;width:31.7px;overflow:hidden;font-size:12px;line-height:12px;height:15px;color:#000;letter-spacing:-0.162px;">FM</div>
<div class="t" style="left:260.1px;top:590.54px;width:101.9px;overflow:hidden;font-size:12px;line-height:12px;height:15px;color:#000;letter-spacing:-0.200px;">IA</div>
<div class="t" style="left:367.7px;top:590.54px;width:99.3px;overflow:hidden;font-size:12px;line-height:12px;height:15px;color:#000;letter-spacing:-0.200px;">IE</div>
<div class="t" style="left:473.2px;top:590.54px;width:339.4px;overflow:hidden;font-size:12px;line-height:12px;height:15px;color:#000;letter-spacing:-0.577px;">Ready</div>
<div class="t" style="left:819px;top:590.54px;width:65.0px;overflow:hidden;font-size:12px;line-height:12px;height:15px;color:#000;letter-spacing:-0.550px;">144.60</div>
<div class="t" style="left:890px;top:590.54px;width:64.0px;overflow:hidden;font-size:12px;line-height:12px;height:15px;color:#000;letter-spacing:-0.304px;">-82.41</div>
<div class="t" style="left:960px;top:590.54px;width:98.0px;overflow:hidden;font-size:12px;line-height:12px;height:15px;color:#000;letter-spacing:-0.658px;">30UUC6475625581</div>
<div class="t" style="left:32.3px;top:608.54px;width:59.7px;overflow:hidden;font-size:12px;line-height:12px;height:15px;color:#000;letter-spacing:-0.245px;">23/02/2018</div>
<div class="t" style="left:98.3px;top:608.54px;width:46.7px;overflow:hidden;font-size:12px;line-height:12px;height:15px;color:#000;letter-spacing:-0.601px;">00:02:13</div>
<div class="t" style="left:151.5px;top:608.54px;width:64.5px;overflow:hidden;font-size:12px;line-height:12px;height:15px;color:#000;letter-spacing:-0.667px;">72.750</div>
<div class="t" style="left:222.3px;top:608.54px;width:31.7px;overflow:hidden;font-size:12px;line-height:12px;height:15px;color:#000;letter-spacing:-0.162px;">FM</div>
<div class="t" style="left:260.1px;top:608.54px;width:101.9px;overflow:hidden;font-size:12px;line-height:12px;height:15px;color:#000;letter-spacing:-0.200px;">IA</div>
<div class="t" style="left:367.7px;top:608.54px;width:99.3px;overflow:hidden;font-size:12px;line-height:12px;height:15px;color:#000;letter-spacing:-0.200px;">IF</div>
<div class="t" style="left:473.2px;top:608.54px;width:339.4px;overflow:hidden;font-size:12px;line-height:12px;height:15px;color:#000;letter-spacing:-0.577px;">Ready</div>
<div class="t" style="left:819px;top:608.54px;width:65.0px;overflow:hidden;font-size:12px;line-height:12px;height:15px;color:#000;letter-spacing:-0.550px;">146.86</div>
<div class="t" style="left:890px;top:608.54px;width:64.0px;overflow:hidden;font-size:12px;line-height:12px;height:15px;color:#000;letter-spacing:-0.304px;">-82.38</div>
<div class="t" style="left:960px;top:608.54px;width:98.0px;overflow:hidden;font-size:12px;line-height:12px;height:15px;color:#000;letter-spacing:-0.658px;">30UUC6373025004</div>
<div class="t" style="left:32.3px;top:626.54px;width:59.7px;overflow:hidden;font-size:12px;line-height:12px;height:15px;color:#000;letter-spacing:-0.245px;">23/02/2018</div>
<div class="t" style="left:98.3px;top:626.54px;width:46.7px;overflow:hidden;font-size:12px;line-height:12px;height:15px;color:#000;letter-spacing:-0.601px;">00:02:19</div>
<div class="t" style="left:151.5px;top:626.54px;width:64.5px;overflow:hidden;font-size:12px;line-height:12px;height:15px;color:#000;letter-spacing:-0.667px;">72.750</div>
<div class="t" style="left:222.3px;top:626.54px;width:31.7px;overflow:hidden;font-size:12px;line-height:12px;height:15px;color:#000;letter-spacing:-0.162px;">FM</div>
<div class="t" style="left:260.1px;top:626.54px;width:101.9px;overflow:hidden;font-size:12px;line-height:12px;height:15px;color:#000;letter-spacing:-0.200px;">IA</div>
<div class="t" style="left:367.7px;top:626.54px;width:99.3px;overflow:hidden;font-size:12px;line-height:12px;height:15px;color:#000;letter-spacing:-0.200px;">IK</div>
<div class="t" style="left:473.2px;top:626.54px;width:339.4px;overflow:hidden;font-size:12px;line-height:12px;height:15px;color:#000;letter-spacing:0.007px;">In Formup Location</div>
<div class="t" style="left:819px;top:626.54px;width:65.0px;overflow:hidden;font-size:12px;line-height:12px;height:15px;color:#000;letter-spacing:-0.550px;">152.67</div>
<div class="t" style="left:890px;top:626.54px;width:64.0px;overflow:hidden;font-size:12px;line-height:12px;height:15px;color:#000;letter-spacing:-0.304px;">-82.35</div>
<div class="t" style="left:960px;top:626.54px;width:98.0px;overflow:hidden;font-size:12px;line-height:12px;height:15px;color:#000;letter-spacing:-0.658px;">30UUC6103823623</div>
<div class="t" style="left:1064px;top:626.54px;width:76.3px;overflow:hidden;font-size:12px;line-height:12px;height:15px;color:#000;letter-spacing:-0.264px;">Heavy Duty Engine</div>
<div class="t" style="left:32.3px;top:644.54px;width:59.7px;overflow:hidden;font-size:12px;line-height:12px;height:15px;color:#000;letter-spacing:-0.245px;">23/02/2018</div>
<div class="t" style="left:98.3px;top:644.54px;width:46.7px;overflow:hidden;font-size:12px;line-height:12px;height:15px;color:#000;letter-spacing:-0.601px;">00:02:30</div>
<div class="t" style="left:151.5px;top:644.54px;width:64.5px;overflow:hidden;font-size:12px;line-height:12px;height:15px;color:#000;letter-spacing:-0.667px;">72.750</div>
<div class="t" style="left:222.3px;top:644.54px;width:31.7px;overflow:hidden;font-size:12px;line-height:12px;height:15px;color:#000;letter-spacing:-0.162px;">FM</div>
<div class="t" style="left:260.1px;top:644.54px;width:101.9px;overflow:hidden;font-size:12px;line-height:12px;height:15px;color:#000;letter-spacing:-0.200px;">IA</div>
<div class="t" style="left:367.7px;top:644.54px;width:99.3px;overflow:hidden;font-size:12px;line-height:12px;height:15px;color:#000;letter-spacing:-0.200px;">IG</div>
<div class="t" style="left:473.2px;top:644.54px;width:339.4px;overflow:hidden;font-size:12px;line-height:12px;height:15px;color:#000;letter-spacing:-0.577px;">Ready</div>
<div class="t" style="left:819px;top:644.54px;width:65.0px;overflow:hidden;font-size:12px;line-height:12px;height:15px;color:#000;letter-spacing:-0.550px;">140.17</div>
<div class="t" style="left:890px;top:644.54px;width:64.0px;overflow:hidden;font-size:12px;line-height:12px;height:15px;color:#000;letter-spacing:-0.304px;">-82.65</div>
<div class="t" style="left:960px;top:644.54px;width:98.0px;overflow:hidden;font-size:12px;line-height:12px;height:15px;color:#000;letter-spacing:-0.658px;">30UUC6696626510</div>
<div class="t" style="left:32.3px;top:662.54px;width:59.7px;overflow:hidden;font-size:12px;line-height:12px;height:15px;color:#000;letter-spacing:-0.245px;">23/02/2018</div>
<div class="t" style="left:98.3px;top:662.54px;width:46.7px;overflow:hidden;font-size:12px;line-height:12px;height:15px;color:#000;letter-spacing:-0.601px;">00:02:37</div>
<div class="t" style="left:151.5px;top:662.54px;width:64.5px;overflow:hidden;font-size:12px;line-height:12px;height:15px;color:#000;letter-spacing:-0.667px;">72.750</div>
<div class="t" style="left:222.3px;top:662.54px;width:31.7px;overflow:hidden;font-size:12px;line-height:12px;height:15px;color:#000;letter-spacing:-0.162px;">FM</div>
<div class="t" style="left:260.1px;top:662.54px;width:101.9px;overflow:hidden;font-size:12px;line-height:12px;height:15px;color:#000;letter-spacing:-0.094px;">All Stations</div>
<div class="t" style="left:367.7px;top:662.54px;width:99.3px;overflow:hidden;font-size:12px;line-height:12px;height:15px;color:#000;letter-spacing:-0.200px;">IA</div>
<div class="t" style="left:473.2px;top:662.54px;width:339.4px;overflow:hidden;font-size:12px;line-height:12px;height:15px;color:#000;letter-spacing:-0.172px;">Requests update on Umbrella's&nbsp; progress</div>
<div class="t" style="left:819px;top:662.54px;width:65.0px;overflow:hidden;font-size:12px;line-height:12px;height:15px;color:#000;letter-spacing:-0.550px;">148.01</div>
<div class="t" style="left:890px;top:662.54px;width:64.0px;overflow:hidden;font-size:12px;line-height:12px;height:15px;color:#000;letter-spacing:-0.304px;">-78.48</div>
<div class="t" style="left:960px;top:662.54px;width:98.0px;overflow:hidden;font-size:12px;line-height:12px;height:15px;color:#000;letter-spacing:-0.599px;">30UUC6331124536</div>
<div class="t" style="left:32.3px;top:680.54px;width:59.7px;overflow:hidden;font-size:12px;line-height:12px;height:15px;color:#000;letter-spacing:-0.245px;">23/02/2018</div>
<div class="t" style="left:98.3px;top:680.54px;width:46.7px;overflow:hidden;font-size:12px;line-height:12px;height:15px;color:#000;letter-spacing:-0.601px;">00:02:47</div>
<div class="t" style="left:151.5px;top:680.54px;width:64.5px;overflow:hidden;font-size:12px;line-height:12px;height:15px;color:#000;letter-spacing:-0.667px;">72.750</div>
<div class="t" style="left:222.3px;top:680.54px;width:31.7px;overflow:hidden;font-size:12px;line-height:12px;height:15px;color:#000;letter-spacing:-0.162px;">FM</div>
<div class="t" style="left:260.1px;top:680.54px;width:101.9px;overflow:hidden;font-size:12px;line-height:12px;height:15px;color:#000;letter-spacing:-0.200px;">IA</div>
<div class="t" style="left:367.7px;top:680.54px;width:99.3px;overflow:hidden;font-size:12px;line-height:12px;height:15px;color:#000;letter-spacing:-0.200px;">IE</div>
<div class="t" style="left:473.2px;top:680.54px;width:339.4px;overflow:hidden;font-size:12px;line-height:12px;height:15px;color:#000;letter-spacing:-0.103px;">Umbrella passed by location heading North DRAPVB a few minutes</div>
<div class="t" style="left:819px;top:680.54px;width:65.0px;overflow:hidden;font-size:12px;line-height:12px;height:15px;color:#000;letter-spacing:-0.550px;">144.68</div>
<div class="t" style="left:890px;top:680.54px;width:64.0px;overflow:hidden;font-size:12px;line-height:12px;height:15px;color:#000;letter-spacing:-0.304px;">-82.39</div>
<div class="t" style="left:960px;top:680.54px;width:98.0px;overflow:hidden;font-size:12px;line-height:12px;height:15px;color:#000;letter-spacing:-0.658px;">30UUC6469925592</div>
<div class="t" style="left:1064px;top:680.54px;width:76.3px;overflow:hidden;font-size:12px;line-height:12px;height:15px;color:#000;letter-spacing:-0.477px;">Reads code DRAPVB</div>
<div class="t" style="left:32.3px;top:698.54px;width:59.7px;overflow:hidden;font-size:12px;line-height:12px;height:15px;color:#000;letter-spacing:-0.245px;">23/02/2018</div>
<div class="t" style="left:98.3px;top:698.54px;width:46.7px;overflow:hidden;font-size:12px;line-height:12px;height:15px;color:#000;letter-spacing:-0.601px;">00:03:06</div>
<div class="t" style="left:151.5px;top:698.54px;width:64.5px;overflow:hidden;font-size:12px;line-height:12px;height:15px;color:#000;letter-spacing:-0.667px;">72.750</div>
<div class="t" style="left:222.3px;top:698.54px;width:31.7px;overflow:hidden;font-size:12px;line-height:12px;height:15px;color:#000;letter-spacing:-0.162px;">FM</div>
<div class="t" style="left:260.1px;top:698.54px;width:101.9px;overflow:hidden;font-size:12px;line-height:12px;height:15px;color:#000;letter-spacing:-0.200px;">IE</div>
<div class="t" style="left:367.7px;top:698.54px;width:99.3px;overflow:hidden;font-size:12px;line-height:12px;height:15px;color:#000;letter-spacing:-0.200px;">IA</div>
<div class="t" style="left:473.2px;top:698.54px;width:339.4px;overflow:hidden;font-size:12px;line-height:12px;height:15px;color:#000;letter-spacing:0.110px;">Acknowledges information</div>
<div class="t" style="left:819px;top:698.54px;width:65.0px;overflow:hidden;font-size:12px;line-height:12px;height:15px;color:#000;letter-spacing:-0.550px;">147.97</div>
<div class="t" style="left:890px;top:698.54px;width:64.0px;overflow:hidden;font-size:12px;line-height:12px;height:15px;color:#000;letter-spacing:-0.304px;">-78.46</div>
<div class="t" style="left:960px;top:698.54px;width:98.0px;overflow:hidden;font-size:12px;line-height:12px;height:15px;color:#000;letter-spacing:-0.658px;">30UUC6330524580</div>
<div class="t" style="left:1064px;top:698.54px;width:76.3px;overflow:hidden;font-size:12px;line-height:12px;height:15px;color:#000;letter-spacing:-0.143px;">All callsigns use</div>
</body></html>
